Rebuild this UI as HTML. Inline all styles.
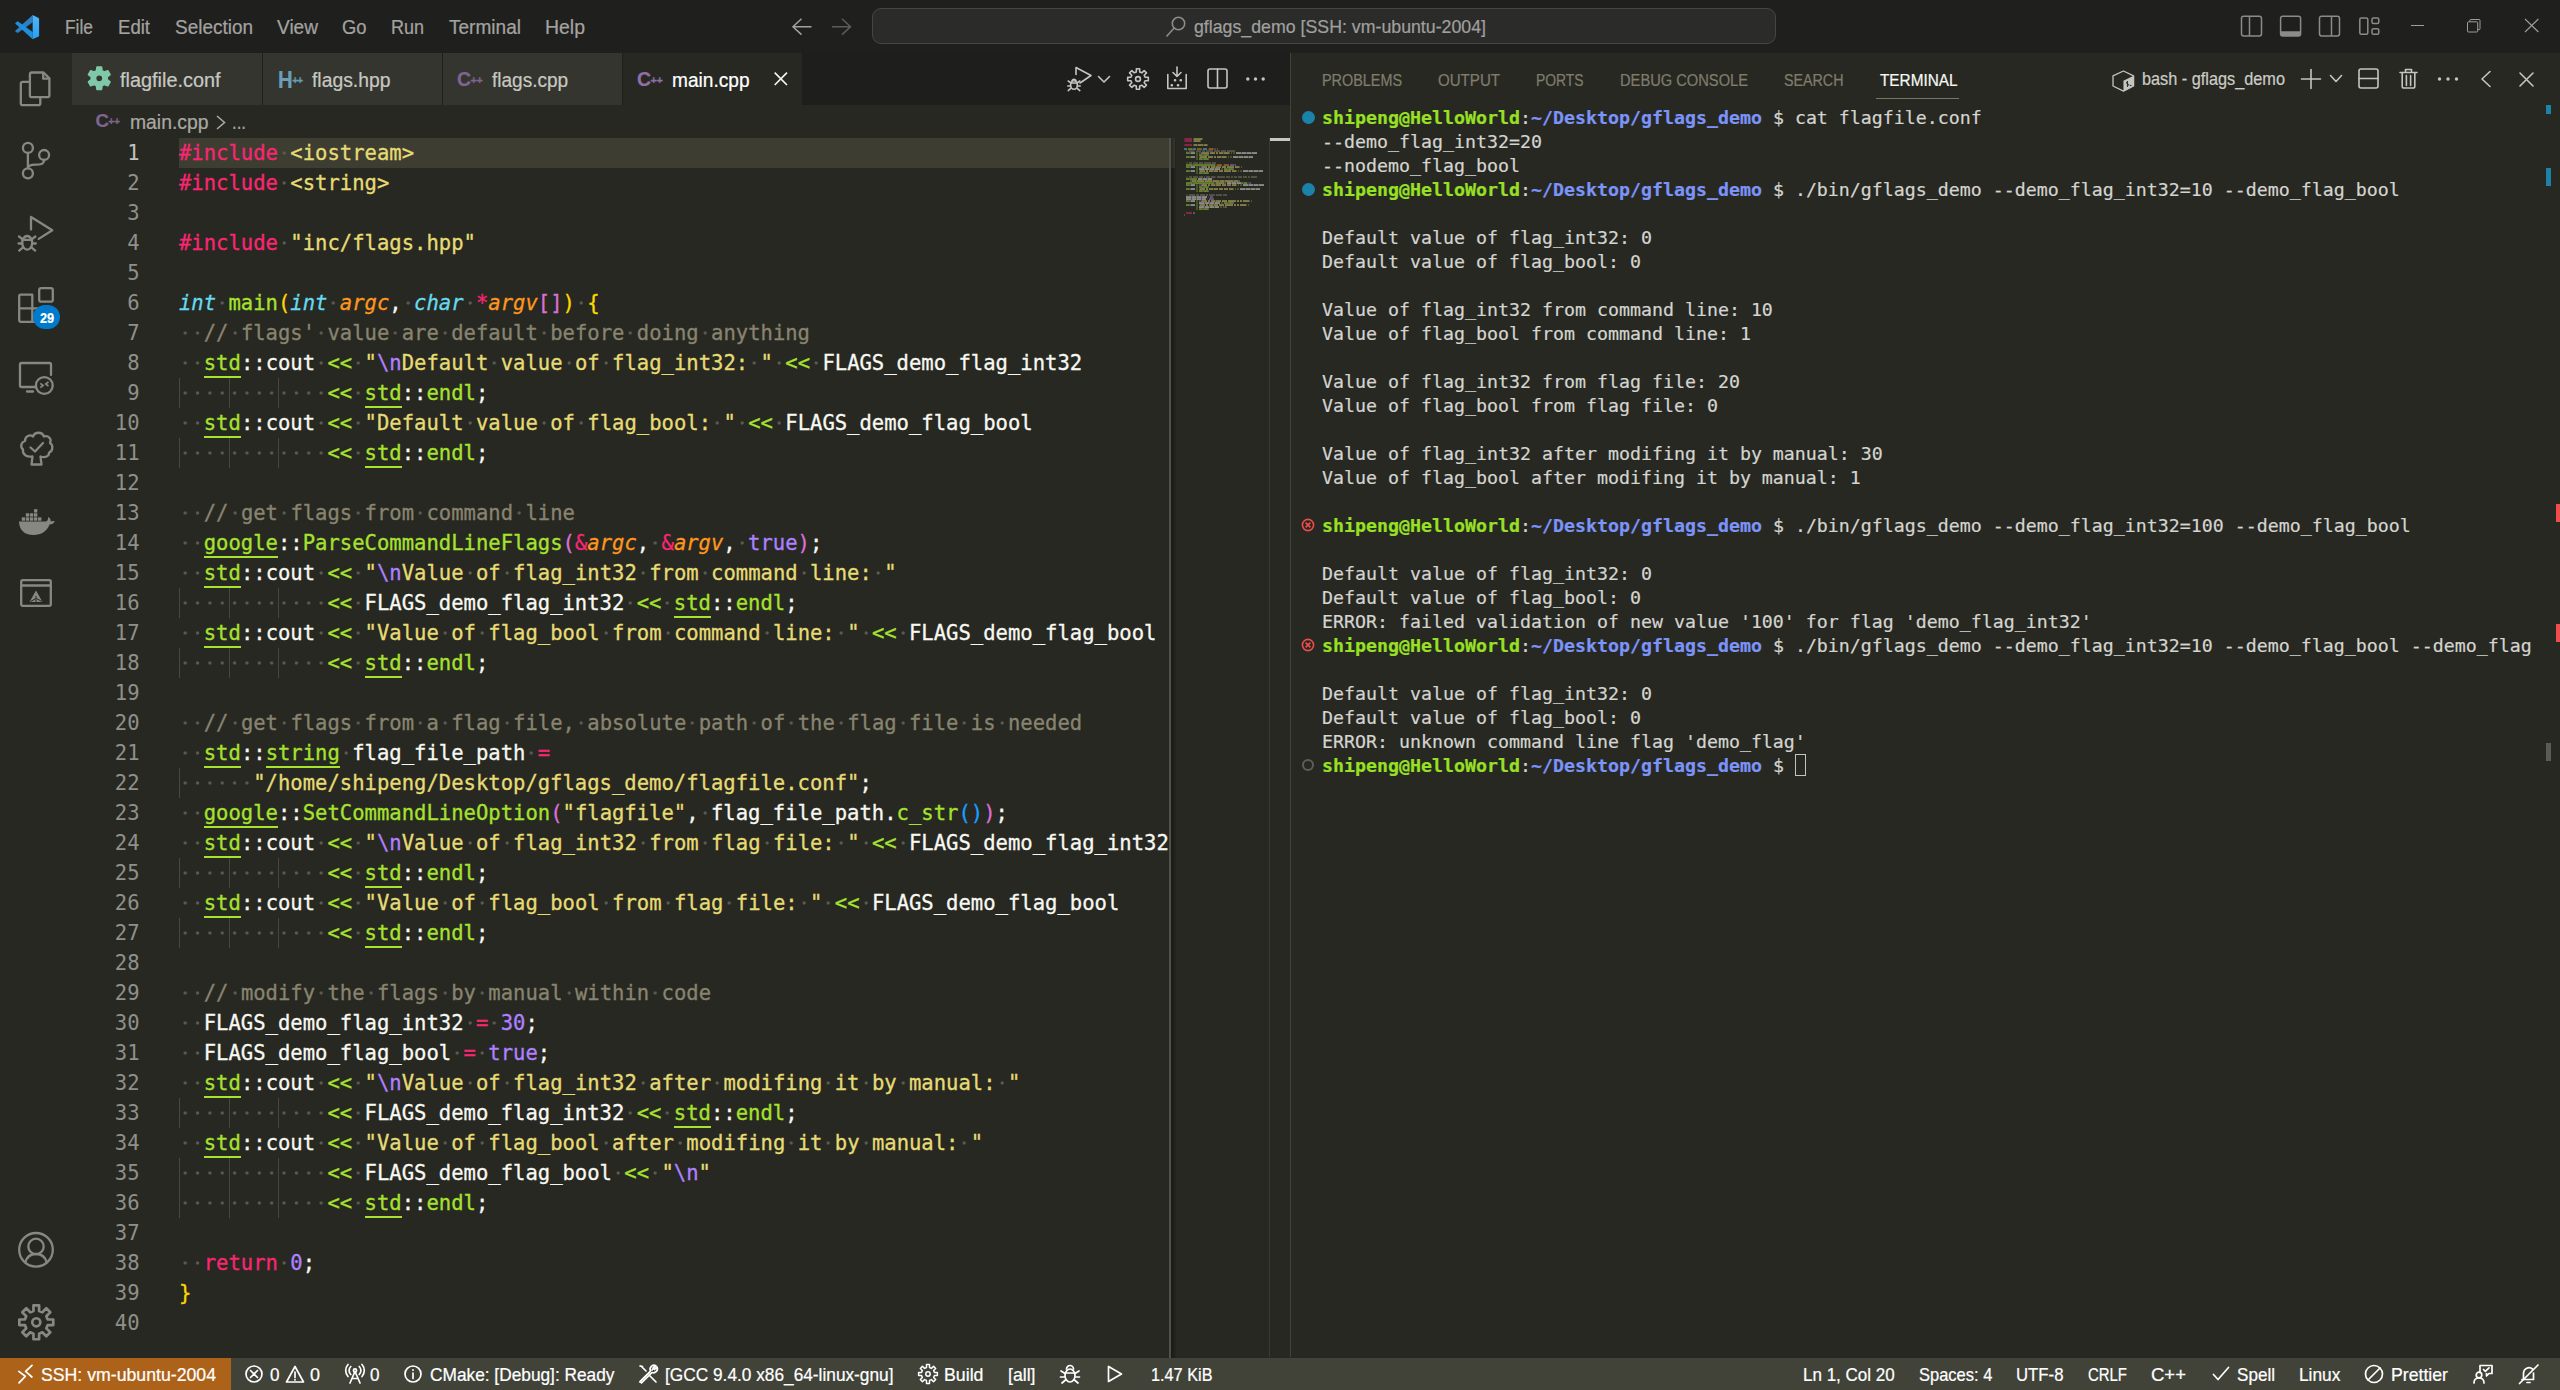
<!DOCTYPE html>
<html><head><meta charset="utf-8"><title>main.cpp - gflags_demo [SSH: vm-ubuntu-2004] - Visual Studio Code</title>
<style>

*{box-sizing:border-box;margin:0;padding:0}
html,body{width:2560px;height:1390px;overflow:hidden;background:#272822}
body{position:relative;font-family:"Liberation Sans",sans-serif;color:#ccc}
.abs{position:absolute}
.lb{position:absolute;white-space:pre;display:block;-webkit-text-stroke:0.22px}
svg{position:absolute;overflow:visible}
#titlebar{position:absolute;left:0;top:0;width:2560px;height:53px;background:#1f1f1e}
#cc{position:absolute;left:872px;top:8px;width:904px;height:36px;border:1px solid #454545;border-radius:9px;background:#2b2b2a}
#act{position:absolute;left:0;top:53px;width:72px;height:1304px;background:#272822}
#tabs{position:absolute;left:72px;top:53px;width:1218px;height:52px;background:#1e1f1c}
.tab{position:absolute;top:0;height:52px;background:#34352f}
.tab.act{background:#272822}
#bc{position:absolute;left:72px;top:105px;width:1218px;height:33px;background:#272822}
#editor{position:absolute;left:0;top:0;width:1169px;height:1357px;overflow:hidden}
.ln{position:absolute;left:72px;width:67.6px;text-align:right;height:30px;line-height:30px;font-family:"DejaVu Sans Mono","Liberation Mono",monospace;font-size:20.55px;color:#90908a;letter-spacing:0px;white-space:pre}
.ln.a{color:#c2c2bf}
.cl{position:absolute;left:179px;height:30px;line-height:30px;font-family:"DejaVu Sans Mono","Liberation Mono",monospace;font-size:20.55px;letter-spacing:0px;white-space:pre;color:#f8f8f2;-webkit-text-stroke:0.3px}
.cl span{display:inline}
.ws{background:radial-gradient(circle at 50% 50%,#595a52 1.1px,rgba(89,90,82,0) 2.1px) 0 -3px/12.37px 30px repeat-x}
.k{color:#f92672} .s{color:#e6db74} .c{color:#88846f} .g{color:#a6e22e}
.u{color:#a6e22e;position:relative} .u::after{content:'';position:absolute;left:0;right:0;top:25px;height:2px;background:#a6e22e}
.t{color:#66d9ef;font-style:italic} .p{color:#fd971f;font-style:italic}
.n{color:#ae81ff} .w{color:#f8f8f2} .b1{color:#ffd700} .b2{color:#da70d6} .b3{color:#179fff}
.ig{position:absolute;width:1px;height:30px;background:#464741}
#hl{position:absolute;left:179px;top:138px;width:996px;height:30px;background:#3e3d32}
.mm{left:1184px;top:138px}
#panel{position:absolute;left:1290px;top:53px;width:1270px;height:1304px;background:#272822;border-left:1px solid #414339}
#term{position:absolute;left:1291px;top:105px;width:1269px;height:1252px;overflow:hidden}
#term .tl{position:absolute;left:31px;height:24px;line-height:24px;font-family:"DejaVu Sans Mono","Liberation Mono",monospace;font-size:18.27px;letter-spacing:0px;white-space:pre;color:#d4d4d0}
#term .tl{margin-top:-104.3px;-webkit-text-stroke:0.2px} #term i, #term svg{margin-top:-105px}
.tg{color:#98e024;font-weight:700;letter-spacing:0px} .tb{color:#7c93f7;font-weight:700;letter-spacing:0px}
.td{position:absolute;left:10.6px;width:13px;height:13px;border-radius:50%;background:#1b83aa}
.to{position:absolute;left:10.9px;width:12.4px;height:12.4px;border-radius:50%;border:2.5px solid #5e5e59}
.te{left:10px}
.cur{position:absolute;left:504px;width:11px;height:22px;border:1px solid #c4c4bf}
#status{position:absolute;left:0;top:1358px;width:2560px;height:32px;background:#414339}
#remote{position:absolute;left:0;top:0;width:231px;height:33px;background:#ac6218}

</style></head><body>
<div id="titlebar">
<svg style="left:14.8px;top:14.8px" width="24.4" height="24.4" viewBox="0 0 24 24" ><defs><linearGradient id="vg" x1="0" y1="0" x2="0" y2="1"><stop offset="0" stop-color="#52b4f8"/><stop offset="1" stop-color="#27a0f4"/></linearGradient></defs><path d="M17.4 0.1V7.2L2.7 17.8 0.5 16.4Q0 15.8 0.5 15.3z" fill="#2a80c2"/><path d="M2.7 6.2 17.4 16.8V23.9L0.5 8.7Q0 8.200 0.500 7.600z" fill="#1f8fdc"/><path d="M17.4 0.1 23.200 2.900Q23.700 3.200 23.700 3.800V20.300Q23.700 20.800 23.200 21.100L17.400 23.900z" fill="url(#vg)"/></svg>
<span class="lb" style="left:65px;top:12.2px;height:30px;line-height:30px;font-size:19.4px;color:#a3a3a0;font-family:'Liberation Sans',sans-serif;font-weight:400;transform:scaleX(0.8960);transform-origin:0 50%;">File</span>
<span class="lb" style="left:118px;top:12.2px;height:30px;line-height:30px;font-size:19.4px;color:#a3a3a0;font-family:'Liberation Sans',sans-serif;font-weight:400;transform:scaleX(0.9575);transform-origin:0 50%;">Edit</span>
<span class="lb" style="left:174.5px;top:12.2px;height:30px;line-height:30px;font-size:19.4px;color:#a3a3a0;font-family:'Liberation Sans',sans-serif;font-weight:400;transform:scaleX(0.9777);transform-origin:0 50%;">Selection</span>
<span class="lb" style="left:277px;top:12.2px;height:30px;line-height:30px;font-size:19.4px;color:#a3a3a0;font-family:'Liberation Sans',sans-serif;font-weight:400;transform:scaleX(0.9835);transform-origin:0 50%;">View</span>
<span class="lb" style="left:342px;top:12.2px;height:30px;line-height:30px;font-size:19.4px;color:#a3a3a0;font-family:'Liberation Sans',sans-serif;font-weight:400;transform:scaleX(0.9469);transform-origin:0 50%;">Go</span>
<span class="lb" style="left:391px;top:12.2px;height:30px;line-height:30px;font-size:19.4px;color:#a3a3a0;font-family:'Liberation Sans',sans-serif;font-weight:400;transform:scaleX(0.9275);transform-origin:0 50%;">Run</span>
<span class="lb" style="left:448.5px;top:12.2px;height:30px;line-height:30px;font-size:19.4px;color:#a3a3a0;font-family:'Liberation Sans',sans-serif;font-weight:400;transform:scaleX(0.9825);transform-origin:0 50%;">Terminal</span>
<span class="lb" style="left:545px;top:12.2px;height:30px;line-height:30px;font-size:19.4px;color:#a3a3a0;font-family:'Liberation Sans',sans-serif;font-weight:400;transform:scaleX(1.0027);transform-origin:0 50%;">Help</span>
<svg style="left:791px;top:16px" width="22" height="21" viewBox="0 0 22 21" ><path d="M10.500 2.800 2 10.700l8.500 7.900M2 10.700H20.500" fill="none" stroke="#a2a2a0" stroke-width="1.500"/></svg>
<svg style="left:830px;top:16px" width="22" height="21" viewBox="0 0 22 21" ><path d="M12 2.800l8.500 7.900-8.500 7.900M20.500 10.700H2" fill="none" stroke="#5c5c5a" stroke-width="1.500"/></svg>
<div id="cc"></div>
<svg style="left:1165px;top:15px" width="22" height="23" viewBox="0 0 22 23" ><circle cx="13.500" cy="8.500" r="6.200" fill="none" stroke="#8c8c8a" stroke-width="1.600"/><path d="M9.200 13 1.500 21.500" stroke="#8c8c8a" stroke-width="1.600"/></svg>
<span class="lb" style="left:1194px;top:12.0px;height:30px;line-height:30px;font-size:19px;color:#a0a09e;font-family:'Liberation Sans',sans-serif;font-weight:400;transform:scaleX(0.9340);transform-origin:0 50%;">gflags_demo [SSH: vm-ubuntu-2004]</span>
<svg style="left:2240px;top:15px" width="23" height="22" viewBox="0 0 23 22" ><rect x="1.500" y="1.200" width="20" height="19.700" rx="2.200" fill="none" stroke="#8b8b88" stroke-width="1.500"/><path d="M9.500 1.200v19.700" fill="none" stroke="#8b8b88" stroke-width="1.500"/></svg>
<svg style="left:2279px;top:15px" width="23" height="22" viewBox="0 0 23 22" ><rect x="1.600" y="1.200" width="20" height="19.700" rx="2.200" fill="none" stroke="#8b8b88" stroke-width="1.500"/><path d="M1.600 16.200h20v2.500a2.200 2.200 0 0 1-2.200 2.200H3.800a2.200 2.200 0 0 1-2.200-2.200z" fill="#8b8b88"/></svg>
<svg style="left:2318px;top:15px" width="23" height="22" viewBox="0 0 23 22" ><rect x="1.500" y="1.200" width="20" height="19.700" rx="2.200" fill="none" stroke="#8b8b88" stroke-width="1.500"/><path d="M13.500 1.200v19.700" fill="none" stroke="#8b8b88" stroke-width="1.500"/></svg>
<svg style="left:2358px;top:15px" width="23" height="22" viewBox="0 0 23 22" ><rect x="1.800" y="3" width="8" height="16.200" rx="1.500" fill="none" stroke="#8b8b88" stroke-width="1.500"/><rect x="14" y="3" width="6.800" height="5.400" rx="1.500" fill="none" stroke="#8b8b88" stroke-width="1.500"/><rect x="14" y="13.800" width="6.800" height="5.400" rx="1.500" fill="none" stroke="#8b8b88" stroke-width="1.500"/></svg>
<svg style="left:2411px;top:24.8px" width="13" height="1" viewBox="0 0 13 1" ><path d="M0 .5h13" stroke="#9d9d9a" stroke-width="1"/></svg>
<svg style="left:2467px;top:19px" width="14" height="14" viewBox="0 0 14 14" ><rect x="0.500" y="2.800" width="10.200" height="10.200" rx="1" fill="none" stroke="#9d9d9a" stroke-width="1"/><path d="M2.800 2.800V1.500Q2.800 0.500 3.800 0.500H12Q13 0.500 13 1.500V9.700Q13 10.700 12 10.700H10.700" fill="none" stroke="#9d9d9a" stroke-width="1"/></svg>
<svg style="left:2525px;top:19px" width="13.4" height="13" viewBox="0 0 13.4 13" ><path d="M0 0l13.400 13M13.400 0 0 13" stroke="#9d9d9a" stroke-width="1.100"/></svg>
</div>
<div id="act"></div>
<svg style="left:0px;top:0px" width="72" height="300" viewBox="0 0 72 300" ><path d="M29.900 95.200V74.500a2 2 0 0 1 2-2H43.500L49.400 78.400V95.200a2 2 0 0 1-2 2H31.900a2 2 0 0 1-2-2z" fill="none" stroke="#888882" stroke-width="2.300" stroke-linejoin="round" stroke-linecap="round"/><path d="M43.200 72.800V78.700H49.100" fill="none" stroke="#888882" stroke-width="2.300" stroke-linejoin="round" stroke-linecap="round"/><path d="M29.600 81.900H22.800a2 2 0 0 0-2 2V103.200a2 2 0 0 0 2 2H38.300a2 2 0 0 0 2-2V97.600" fill="none" stroke="#888882" stroke-width="2.300" stroke-linejoin="round" stroke-linecap="round"/>
<circle cx="27.900" cy="147.900" r="5" fill="none" stroke="#888882" stroke-width="2.300" stroke-linejoin="round" stroke-linecap="round"/><circle cx="27.900" cy="173.300" r="5" fill="none" stroke="#888882" stroke-width="2.300" stroke-linejoin="round" stroke-linecap="round"/><circle cx="44.100" cy="155" r="5" fill="none" stroke="#888882" stroke-width="2.300" stroke-linejoin="round" stroke-linecap="round"/><path d="M27.900 152.900V168.300M44.100 160c-.4 4.400-3.600 4.600-8.600 4.600-4.600 0-7.600.8-7.600 3.700" fill="none" stroke="#888882" stroke-width="2.300" stroke-linejoin="round" stroke-linecap="round"/>
<path d="M31 229.500V217l21.300 13.200-13.600 8.700" fill="none" stroke="#888882" stroke-width="2.300" stroke-linejoin="round" stroke-linecap="round"/><ellipse cx="27.200" cy="242.800" rx="5" ry="6.800" fill="none" stroke="#888882" stroke-width="2.300" stroke-linejoin="round" stroke-linecap="round"/><path d="M22.200 239.800h10M19 236.500l3.400 2.600M35.400 236.500l-3.400 2.600M18.600 243.500h3.600M32.200 243.500h3.600M19.200 250.600l3.800-3.200M35.200 250.600l-3.800-3.200" fill="none" stroke="#888882" stroke-width="2.300" stroke-linejoin="round" stroke-linecap="round"/></svg>
<svg style="left:18px;top:286px" width="38" height="38" viewBox="0 0 38 38" ><path d="M1.200 10.200a1.500 1.500 0 0 1 1.500-1.500h11.600v27.100H2.700a1.500 1.500 0 0 1-1.500-1.500zM1.200 22.400h26.400v13.400H14.300" fill="none" stroke="#888882" stroke-width="2.300" stroke-linejoin="round" stroke-linecap="round"/><path d="M27.600 22.400v13.400H14" fill="none" stroke="#888882" stroke-width="2.300" stroke-linejoin="round" stroke-linecap="round"/><rect x="21.200" y="2.200" width="13.600" height="13.500" rx="2" fill="none" stroke="#888882" stroke-width="2.300" stroke-linejoin="round" stroke-linecap="round"/></svg>
<div class="abs" style="left:33px;top:305px;width:27px;height:24px;border-radius:12px;background:#007acc"></div>
<span class="lb" style="left:39.8px;top:304.1px;height:30px;line-height:30px;font-size:13.8px;color:#fff;font-family:'Liberation Sans',sans-serif;font-weight:700;transform:scaleX(0.9245);transform-origin:0 50%;">29</span>
<svg style="left:18px;top:361px" width="38" height="36" viewBox="0 0 38 36" ><path d="M22 26H3.500a1.500 1.500 0 0 1-1.500-1.500v-21A1.500 1.500 0 0 1 3.500 2h28A1.500 1.500 0 0 1 33 3.500V14" fill="none" stroke="#888882" stroke-width="2.300" stroke-linejoin="round" stroke-linecap="round"/><path d="M9 30.500h6" fill="none" stroke="#888882" stroke-width="2.300" stroke-linejoin="round" stroke-linecap="round"/><circle cx="26.300" cy="24.500" r="8.400" fill="#272822" stroke="#888882" stroke-width="2.300"/><path d="M22.300 22.400l2.800 2.100-2.800 2.200M30.500 20.900l-2.800 2.100 2.800 2.200" fill="none" stroke="#888882" stroke-width="1.700"/></svg>
<svg style="left:19px;top:430px" width="36" height="38" viewBox="0 0 36 38" ><path d="M13.500 26.500C8 27.500 3 24.500 4 19.500 1 17 2 12 6 11 6 6 11 4 14 6.500 16 1.500 23 1.500 25 6.500 29.500 5 33 9 31 13 34.500 15 34 21.500 30 22.500 30.500 26.500 26 28 21.500 26.500L22.500 34.500H12.500z" fill="none" stroke="#888882" stroke-width="2.300" stroke-linejoin="round" stroke-linecap="round"/><path d="M11.500 17.500 16 21.500 24 13" fill="none" stroke="#888882" stroke-width="2.300" stroke-linejoin="round" stroke-linecap="round"/></svg>
<svg style="left:17.5px;top:508.6px" width="37.2" height="26" viewBox="0 0 40 28" ><path d="M1 13.500h28.500c2-.4 3-2 3-5 2.500 1.500 3 3.500 2.500 5 1.500-.8 3-.8 4.500-.3-1 2.500-3 3.500-5.500 3.500C31 24 25.500 28 16.500 28 6.500 28 1.500 22.500 1 13.500z" fill="#888882"/><g fill="#888882"><rect x="4" y="9" width="3.600" height="3.600"/><rect x="8.400" y="9" width="3.600" height="3.600"/><rect x="12.800" y="9" width="3.600" height="3.600"/><rect x="17.200" y="9" width="3.600" height="3.600"/><rect x="21.600" y="9" width="3.600" height="3.600"/><rect x="8.400" y="4.600" width="3.600" height="3.600"/><rect x="12.800" y="4.600" width="3.600" height="3.600"/><rect x="17.200" y="4.600" width="3.600" height="3.600"/><rect x="17.200" y="0.200" width="3.600" height="3.600"/></g></svg>
<svg style="left:20px;top:579px" width="32" height="28" viewBox="0 0 32 28" ><rect x="1.200" y="1.200" width="29.600" height="25.600" rx="1.500" fill="none" stroke="#888882" stroke-width="2.300" stroke-linejoin="round" stroke-linecap="round"/><path d="M1.500 6.500h29" fill="none" stroke="#888882" stroke-width="2.300" stroke-linejoin="round" stroke-linecap="round"/><path d="M16 11.500 22.500 23h-13z" fill="#888882"/><path d="M16 17v6M16 19.500 10.500 22.500M16.500 19.500 22 22.500" stroke="#272822" stroke-width="1"/></svg>
<svg style="left:0px;top:1200px" width="72" height="100" viewBox="0 0 72 100" ><circle cx="36" cy="49.800" r="16.800" fill="none" stroke="#888882" stroke-width="2.300" stroke-linejoin="round" stroke-linecap="round"/><circle cx="36" cy="46.400" r="7.700" fill="none" stroke="#888882" stroke-width="2.300" stroke-linejoin="round" stroke-linecap="round"/><path d="M25.300 62.500c1.400-5.600 5.600-8.500 10.700-8.500s9.300 2.900 10.700 8.500" fill="none" stroke="#888882" stroke-width="2.300" stroke-linejoin="round" stroke-linecap="round"/></svg>
<svg style="left:17.5px;top:1303.6px" width="36.6" height="36.6" viewBox="0 0 36.6 36.6" ><path d="M15.48 6.93 L15.48 1.33 L21.12 1.33 L21.12 6.93 L24.34 8.27 L28.30 4.30 L32.30 8.30 L28.33 12.26 L29.67 15.48 L35.27 15.48 L35.27 21.12 L29.67 21.12 L28.33 24.34 L32.30 28.30 L28.30 32.30 L24.34 28.33 L21.12 29.67 L21.12 35.27 L15.48 35.27 L15.48 29.67 L12.26 28.33 L8.30 32.30 L4.30 28.30 L8.27 24.34 L6.93 21.12 L1.33 21.12 L1.33 15.48 L6.93 15.48 L8.27 12.26 L4.30 8.30 L8.30 4.30 L12.26 8.27Z" fill="none" stroke="#888882" stroke-width="2.7" stroke-linejoin="round"/><circle cx="18.3" cy="18.3" r="4.03" fill="none" stroke="#888882" stroke-width="2.7"/></svg>
<div id="tabs">
<div class="tab" style="left:0px;width:190px"></div>
<div class="tab" style="left:191px;width:179px"></div>
<div class="tab" style="left:371px;width:179px"></div>
<div class="tab act" style="left:551px;width:179px"></div>
</div><div id="bc"></div>
<svg style="left:86.5px;top:66.3px" width="24.5" height="24.5" viewBox="0 0 24.5 24.5" ><path d="M9.51 4.64 L10.00 1.08 L14.50 1.08 L14.99 4.64 L17.47 6.07 L20.80 4.72 L23.05 8.62 L20.21 10.82 L20.21 13.68 L23.05 15.88 L20.80 19.78 L17.47 18.43 L14.99 19.86 L14.50 23.42 L10.00 23.42 L9.51 19.86 L7.03 18.43 L3.70 19.78 L1.45 15.88 L4.29 13.68 L4.29 10.82 L1.45 8.62 L3.70 4.72 L7.03 6.07Z M8.57 12.25a3.67 3.67 0 1 0 7.35 0a3.67 3.67 0 1 0 -7.35 0Z" fill="#7fc9a9" fill-rule="evenodd" stroke="#7fc9a9" stroke-width="1.6" stroke-linejoin="round"/></svg>
<span class="lb" style="left:120px;top:65.3px;height:30px;line-height:30px;font-size:20px;color:#c8c8c2;font-family:'Liberation Sans',sans-serif;font-weight:400;transform:scaleX(0.9934);transform-origin:0 50%;">flagfile.conf</span>
<span class="lb" style="left:277.5px;top:64.5px;height:30px;line-height:30px;font-size:23px;color:#6a9fb5;font-family:'Liberation Sans',sans-serif;font-weight:700;transform:scaleX(0.8842);transform-origin:0 50%;">H</span><span class="lb" style="left:292.3px;top:65.5px;height:30px;line-height:30px;font-size:10px;color:#6a9fb5;font-family:'Liberation Sans',sans-serif;font-weight:700;letter-spacing:-0.8px">++</span>
<span class="lb" style="left:311.5px;top:65.3px;height:30px;line-height:30px;font-size:20px;color:#c8c8c2;font-family:'Liberation Sans',sans-serif;font-weight:400;transform:scaleX(0.9671);transform-origin:0 50%;">flags.hpp</span>
<span class="lb" style="left:457px;top:64.2px;height:30px;line-height:30px;font-size:19.5px;color:#7e6592;font-family:'Liberation Sans',sans-serif;font-weight:700;">C</span><span class="lb" style="left:470.54px;top:65.2px;height:30px;line-height:30px;font-size:10.920000000000002px;color:#7e6592;font-family:'Liberation Sans',sans-serif;font-weight:700;letter-spacing:-0.3px">++</span>
<span class="lb" style="left:491.8px;top:65.3px;height:30px;line-height:30px;font-size:20px;color:#c8c8c2;font-family:'Liberation Sans',sans-serif;font-weight:400;transform:scaleX(0.9518);transform-origin:0 50%;">flags.cpp</span>
<span class="lb" style="left:637px;top:64.2px;height:30px;line-height:30px;font-size:19.5px;color:#8e6fa8;font-family:'Liberation Sans',sans-serif;font-weight:700;">C</span><span class="lb" style="left:650.54px;top:65.2px;height:30px;line-height:30px;font-size:10.920000000000002px;color:#8e6fa8;font-family:'Liberation Sans',sans-serif;font-weight:700;letter-spacing:-0.3px">++</span>
<span class="lb" style="left:672px;top:65.3px;height:30px;line-height:30px;font-size:20px;color:#ffffff;font-family:'Liberation Sans',sans-serif;font-weight:400;transform:scaleX(0.9562);transform-origin:0 50%;">main.cpp</span>
<svg style="left:774px;top:72.2px" width="13.7" height="13.7" viewBox="0 0 13.7 13.7" ><path d="M0.7 0.7l12.3 12.3M13 0.7l-12.3 12.3" stroke="#f4f4ee" stroke-width="1.7"/></svg>
<span class="lb" style="left:95.5px;top:106.3px;height:30px;line-height:30px;font-size:18.5px;color:#7e6592;font-family:'Liberation Sans',sans-serif;font-weight:700;">C</span><span class="lb" style="left:108.32px;top:107.3px;height:30px;line-height:30px;font-size:10.360000000000001px;color:#7e6592;font-family:'Liberation Sans',sans-serif;font-weight:700;letter-spacing:-0.3px">++</span>
<span class="lb" style="left:129.5px;top:107.3px;height:30px;line-height:30px;font-size:19.4px;color:#a9a9a3;font-family:'Liberation Sans',sans-serif;font-weight:400;transform:scaleX(0.9976);transform-origin:0 50%;">main.cpp</span>
<svg style="left:214.5px;top:114.5px" width="11" height="15" viewBox="0 0 11 15" ><path d="M2 1 9.500 7.500 2 14" fill="none" stroke="#a9a9a3" stroke-width="1.6"/></svg>
<span class="lb" style="left:232px;top:107.3px;height:30px;line-height:30px;font-size:19.4px;color:#a9a9a3;font-family:'Liberation Sans',sans-serif;font-weight:400;transform:scaleX(0.8657);transform-origin:0 50%;">...</span>
<svg style="left:1066px;top:66px" width="28" height="28" viewBox="0 0 28 28" ><path d="M10 8.500V1.500L25 9.500 14 17" fill="none" stroke="#c5c5c0" stroke-width="1.6" stroke-linejoin="round" stroke-linecap="round"/><ellipse cx="8" cy="19" rx="3.400" ry="4.300" fill="none" stroke="#c5c5c0" stroke-width="1.6" stroke-linejoin="round" stroke-linecap="round"/><path d="M4.600 17h6.800M2.200 15l2.400 1.600M13.800 15l-2.400 1.600M1.800 20h2.800M11.400 20h2.800M2.200 24.600l2.600-2.200M13.800 24.600l-2.600-2.200M6 14.600a2.200 2.200 0 0 1 4 0" fill="none" stroke="#c5c5c0" stroke-width="1.6" stroke-linejoin="round" stroke-linecap="round"/></svg>
<svg style="left:1097px;top:75px" width="14" height="10" viewBox="0 0 14 10" ><path d="M1.500 1.500 7 7 12.500 1.500" fill="none" stroke="#c5c5c0" stroke-width="1.6" stroke-linejoin="round" stroke-linecap="round"/></svg>
<svg style="left:1127px;top:68px" width="22" height="22" viewBox="0 0 22 22" ><path d="M9.31 3.94 L9.37 0.68 L12.63 0.68 L12.69 3.94 L14.79 4.81 L17.14 2.55 L19.45 4.86 L17.19 7.21 L18.06 9.31 L21.32 9.37 L21.32 12.63 L18.06 12.69 L17.19 14.79 L19.45 17.14 L17.14 19.45 L14.79 17.19 L12.69 18.06 L12.63 21.32 L9.37 21.32 L9.31 18.06 L7.21 17.19 L4.86 19.45 L2.55 17.14 L4.81 14.79 L3.94 12.69 L0.68 12.63 L0.68 9.37 L3.94 9.31 L4.81 7.21 L2.55 4.86 L4.86 2.55 L7.21 4.81Z" fill="none" stroke="#c5c5c0" stroke-width="1.6" stroke-linejoin="round"/><circle cx="11.0" cy="11.0" r="2.42" fill="none" stroke="#c5c5c0" stroke-width="1.6"/></svg>
<svg style="left:1166px;top:66px" width="22" height="24" viewBox="0 0 22 24" ><path d="M1.800 8.500v14h18.400V8.500M11 1v9.500M7 6.500l4 4 4-4" fill="none" stroke="#c5c5c0" stroke-width="1.6" stroke-linejoin="round" stroke-linecap="round"/><path d="M9 14.300h.1M14.700 14.300h.1M5.800 19.200h.1M12 19.200h.1" stroke="#c5c5c0" stroke-width="2.600" stroke-linecap="round"/></svg>
<svg style="left:1207px;top:68px" width="21" height="21" viewBox="0 0 21 21" ><rect x="1" y="1" width="19" height="19" rx="2" fill="none" stroke="#c5c5c0" stroke-width="1.6" stroke-linejoin="round" stroke-linecap="round"/><path d="M10.500 1v19" fill="none" stroke="#c5c5c0" stroke-width="1.6" stroke-linejoin="round" stroke-linecap="round"/></svg>
<svg style="left:1245px;top:77px" width="22" height="4" viewBox="0 0 22 4" ><circle cx="2.800" cy="2" r="1.700" fill="#c5c5c0"/><circle cx="10.500" cy="2" r="1.700" fill="#c5c5c0"/><circle cx="18.200" cy="2" r="1.700" fill="#c5c5c0"/></svg>
<div id="hl"></div>
<div id="editor">
<div class="ln a" style="top:138px">1</div>
<div class="cl" style="top:138px"><span class="k">#include</span><span class="ws"> </span><span class="s">&lt;iostream&gt;</span></div>
<div class="ln" style="top:168px">2</div>
<div class="cl" style="top:168px"><span class="k">#include</span><span class="ws"> </span><span class="s">&lt;string&gt;</span></div>
<div class="ln" style="top:198px">3</div>
<div class="ln" style="top:228px">4</div>
<div class="cl" style="top:228px"><span class="k">#include</span><span class="ws"> </span><span class="s">"inc/flags.hpp"</span></div>
<div class="ln" style="top:258px">5</div>
<div class="ln" style="top:288px">6</div>
<div class="cl" style="top:288px"><span class="t">int</span><span class="ws"> </span><span class="g">main</span><span class="b1">(</span><span class="t">int</span><span class="ws"> </span><span class="p">argc</span><span class="w">,</span><span class="ws"> </span><span class="t">char</span><span class="ws"> </span><span class="k">*</span><span class="p">argv</span><span class="b2">[]</span><span class="b1">)</span><span class="ws"> </span><span class="b1">{</span></div>
<div class="ln" style="top:318px">7</div>
<div class="cl" style="top:318px"><span class="ws">  </span><span class="c">//<span class="ws"> </span>flags'<span class="ws"> </span>value<span class="ws"> </span>are<span class="ws"> </span>default<span class="ws"> </span>before<span class="ws"> </span>doing<span class="ws"> </span>anything</span></div>
<div class="ln" style="top:348px">8</div>
<div class="cl" style="top:348px"><span class="ws">  </span><span class="u">std</span><span class="w">::</span><span class="w">cout</span><span class="ws"> </span><span class="g">&lt;&lt;</span><span class="ws"> </span><span class="s">"</span><span class="n">\n</span><span class="s">Default<span class="ws"> </span>value<span class="ws"> </span>of<span class="ws"> </span>flag_int32:<span class="ws"> </span>"</span><span class="ws"> </span><span class="g">&lt;&lt;</span><span class="ws"> </span><span class="w">FLAGS_demo_flag_int32</span></div>
<div class="ln" style="top:378px">9</div>
<i class="ig" style="left:179.0px;top:378px"></i>
<i class="ig" style="left:228.5px;top:378px"></i>
<i class="ig" style="left:278.0px;top:378px"></i>
<div class="cl" style="top:378px"><span class="ws">            </span><span class="g">&lt;&lt;</span><span class="ws"> </span><span class="u">std</span><span class="w">::</span><span class="g">endl</span><span class="w">;</span></div>
<div class="ln" style="top:408px">10</div>
<div class="cl" style="top:408px"><span class="ws">  </span><span class="u">std</span><span class="w">::</span><span class="w">cout</span><span class="ws"> </span><span class="g">&lt;&lt;</span><span class="ws"> </span><span class="s">"Default<span class="ws"> </span>value<span class="ws"> </span>of<span class="ws"> </span>flag_bool:<span class="ws"> </span>"</span><span class="ws"> </span><span class="g">&lt;&lt;</span><span class="ws"> </span><span class="w">FLAGS_demo_flag_bool</span></div>
<div class="ln" style="top:438px">11</div>
<i class="ig" style="left:179.0px;top:438px"></i>
<i class="ig" style="left:228.5px;top:438px"></i>
<i class="ig" style="left:278.0px;top:438px"></i>
<div class="cl" style="top:438px"><span class="ws">            </span><span class="g">&lt;&lt;</span><span class="ws"> </span><span class="u">std</span><span class="w">::</span><span class="g">endl</span><span class="w">;</span></div>
<div class="ln" style="top:468px">12</div>
<div class="ln" style="top:498px">13</div>
<div class="cl" style="top:498px"><span class="ws">  </span><span class="c">//<span class="ws"> </span>get<span class="ws"> </span>flags<span class="ws"> </span>from<span class="ws"> </span>command<span class="ws"> </span>line</span></div>
<div class="ln" style="top:528px">14</div>
<div class="cl" style="top:528px"><span class="ws">  </span><span class="u">google</span><span class="w">::</span><span class="g">ParseCommandLineFlags</span><span class="b2">(</span><span class="k">&amp;</span><span class="p">argc</span><span class="w">,</span><span class="ws"> </span><span class="k">&amp;</span><span class="p">argv</span><span class="w">,</span><span class="ws"> </span><span class="n">true</span><span class="b2">)</span><span class="w">;</span></div>
<div class="ln" style="top:558px">15</div>
<div class="cl" style="top:558px"><span class="ws">  </span><span class="u">std</span><span class="w">::</span><span class="w">cout</span><span class="ws"> </span><span class="g">&lt;&lt;</span><span class="ws"> </span><span class="s">"</span><span class="n">\n</span><span class="s">Value<span class="ws"> </span>of<span class="ws"> </span>flag_int32<span class="ws"> </span>from<span class="ws"> </span>command<span class="ws"> </span>line:<span class="ws"> </span>"</span></div>
<div class="ln" style="top:588px">16</div>
<i class="ig" style="left:179.0px;top:588px"></i>
<i class="ig" style="left:228.5px;top:588px"></i>
<i class="ig" style="left:278.0px;top:588px"></i>
<div class="cl" style="top:588px"><span class="ws">            </span><span class="g">&lt;&lt;</span><span class="ws"> </span><span class="w">FLAGS_demo_flag_int32</span><span class="ws"> </span><span class="g">&lt;&lt;</span><span class="ws"> </span><span class="u">std</span><span class="w">::</span><span class="g">endl</span><span class="w">;</span></div>
<div class="ln" style="top:618px">17</div>
<div class="cl" style="top:618px"><span class="ws">  </span><span class="u">std</span><span class="w">::</span><span class="w">cout</span><span class="ws"> </span><span class="g">&lt;&lt;</span><span class="ws"> </span><span class="s">"Value<span class="ws"> </span>of<span class="ws"> </span>flag_bool<span class="ws"> </span>from<span class="ws"> </span>command<span class="ws"> </span>line:<span class="ws"> </span>"</span><span class="ws"> </span><span class="g">&lt;&lt;</span><span class="ws"> </span><span class="w">FLAGS_demo_flag_bool</span></div>
<div class="ln" style="top:648px">18</div>
<i class="ig" style="left:179.0px;top:648px"></i>
<i class="ig" style="left:228.5px;top:648px"></i>
<i class="ig" style="left:278.0px;top:648px"></i>
<div class="cl" style="top:648px"><span class="ws">            </span><span class="g">&lt;&lt;</span><span class="ws"> </span><span class="u">std</span><span class="w">::</span><span class="g">endl</span><span class="w">;</span></div>
<div class="ln" style="top:678px">19</div>
<div class="ln" style="top:708px">20</div>
<div class="cl" style="top:708px"><span class="ws">  </span><span class="c">//<span class="ws"> </span>get<span class="ws"> </span>flags<span class="ws"> </span>from<span class="ws"> </span>a<span class="ws"> </span>flag<span class="ws"> </span>file,<span class="ws"> </span>absolute<span class="ws"> </span>path<span class="ws"> </span>of<span class="ws"> </span>the<span class="ws"> </span>flag<span class="ws"> </span>file<span class="ws"> </span>is<span class="ws"> </span>needed</span></div>
<div class="ln" style="top:738px">21</div>
<div class="cl" style="top:738px"><span class="ws">  </span><span class="u">std</span><span class="w">::</span><span class="u">string</span><span class="ws"> </span><span class="w">flag_file_path</span><span class="ws"> </span><span class="k">=</span></div>
<div class="ln" style="top:768px">22</div>
<i class="ig" style="left:179.0px;top:768px"></i>
<div class="cl" style="top:768px"><span class="ws">      </span><span class="s">"/home/shipeng/Desktop/gflags_demo/flagfile.conf"</span><span class="w">;</span></div>
<div class="ln" style="top:798px">23</div>
<div class="cl" style="top:798px"><span class="ws">  </span><span class="u">google</span><span class="w">::</span><span class="g">SetCommandLineOption</span><span class="b2">(</span><span class="s">"flagfile"</span><span class="w">,</span><span class="ws"> </span><span class="w">flag_file_path</span><span class="w">.</span><span class="g">c_str</span><span class="b3">()</span><span class="b2">)</span><span class="w">;</span></div>
<div class="ln" style="top:828px">24</div>
<div class="cl" style="top:828px"><span class="ws">  </span><span class="u">std</span><span class="w">::</span><span class="w">cout</span><span class="ws"> </span><span class="g">&lt;&lt;</span><span class="ws"> </span><span class="s">"</span><span class="n">\n</span><span class="s">Value<span class="ws"> </span>of<span class="ws"> </span>flag_int32<span class="ws"> </span>from<span class="ws"> </span>flag<span class="ws"> </span>file:<span class="ws"> </span>"</span><span class="ws"> </span><span class="g">&lt;&lt;</span><span class="ws"> </span><span class="w">FLAGS_demo_flag_int32</span></div>
<div class="ln" style="top:858px">25</div>
<i class="ig" style="left:179.0px;top:858px"></i>
<i class="ig" style="left:228.5px;top:858px"></i>
<i class="ig" style="left:278.0px;top:858px"></i>
<div class="cl" style="top:858px"><span class="ws">            </span><span class="g">&lt;&lt;</span><span class="ws"> </span><span class="u">std</span><span class="w">::</span><span class="g">endl</span><span class="w">;</span></div>
<div class="ln" style="top:888px">26</div>
<div class="cl" style="top:888px"><span class="ws">  </span><span class="u">std</span><span class="w">::</span><span class="w">cout</span><span class="ws"> </span><span class="g">&lt;&lt;</span><span class="ws"> </span><span class="s">"Value<span class="ws"> </span>of<span class="ws"> </span>flag_bool<span class="ws"> </span>from<span class="ws"> </span>flag<span class="ws"> </span>file:<span class="ws"> </span>"</span><span class="ws"> </span><span class="g">&lt;&lt;</span><span class="ws"> </span><span class="w">FLAGS_demo_flag_bool</span></div>
<div class="ln" style="top:918px">27</div>
<i class="ig" style="left:179.0px;top:918px"></i>
<i class="ig" style="left:228.5px;top:918px"></i>
<i class="ig" style="left:278.0px;top:918px"></i>
<div class="cl" style="top:918px"><span class="ws">            </span><span class="g">&lt;&lt;</span><span class="ws"> </span><span class="u">std</span><span class="w">::</span><span class="g">endl</span><span class="w">;</span></div>
<div class="ln" style="top:948px">28</div>
<div class="ln" style="top:978px">29</div>
<div class="cl" style="top:978px"><span class="ws">  </span><span class="c">//<span class="ws"> </span>modify<span class="ws"> </span>the<span class="ws"> </span>flags<span class="ws"> </span>by<span class="ws"> </span>manual<span class="ws"> </span>within<span class="ws"> </span>code</span></div>
<div class="ln" style="top:1008px">30</div>
<div class="cl" style="top:1008px"><span class="ws">  </span><span class="w">FLAGS_demo_flag_int32</span><span class="ws"> </span><span class="k">=</span><span class="ws"> </span><span class="n">30</span><span class="w">;</span></div>
<div class="ln" style="top:1038px">31</div>
<div class="cl" style="top:1038px"><span class="ws">  </span><span class="w">FLAGS_demo_flag_bool</span><span class="ws"> </span><span class="k">=</span><span class="ws"> </span><span class="n">true</span><span class="w">;</span></div>
<div class="ln" style="top:1068px">32</div>
<div class="cl" style="top:1068px"><span class="ws">  </span><span class="u">std</span><span class="w">::</span><span class="w">cout</span><span class="ws"> </span><span class="g">&lt;&lt;</span><span class="ws"> </span><span class="s">"</span><span class="n">\n</span><span class="s">Value<span class="ws"> </span>of<span class="ws"> </span>flag_int32<span class="ws"> </span>after<span class="ws"> </span>modifing<span class="ws"> </span>it<span class="ws"> </span>by<span class="ws"> </span>manual:<span class="ws"> </span>"</span></div>
<div class="ln" style="top:1098px">33</div>
<i class="ig" style="left:179.0px;top:1098px"></i>
<i class="ig" style="left:228.5px;top:1098px"></i>
<i class="ig" style="left:278.0px;top:1098px"></i>
<div class="cl" style="top:1098px"><span class="ws">            </span><span class="g">&lt;&lt;</span><span class="ws"> </span><span class="w">FLAGS_demo_flag_int32</span><span class="ws"> </span><span class="g">&lt;&lt;</span><span class="ws"> </span><span class="u">std</span><span class="w">::</span><span class="g">endl</span><span class="w">;</span></div>
<div class="ln" style="top:1128px">34</div>
<div class="cl" style="top:1128px"><span class="ws">  </span><span class="u">std</span><span class="w">::</span><span class="w">cout</span><span class="ws"> </span><span class="g">&lt;&lt;</span><span class="ws"> </span><span class="s">"Value<span class="ws"> </span>of<span class="ws"> </span>flag_bool<span class="ws"> </span>after<span class="ws"> </span>modifing<span class="ws"> </span>it<span class="ws"> </span>by<span class="ws"> </span>manual:<span class="ws"> </span>"</span></div>
<div class="ln" style="top:1158px">35</div>
<i class="ig" style="left:179.0px;top:1158px"></i>
<i class="ig" style="left:228.5px;top:1158px"></i>
<i class="ig" style="left:278.0px;top:1158px"></i>
<div class="cl" style="top:1158px"><span class="ws">            </span><span class="g">&lt;&lt;</span><span class="ws"> </span><span class="w">FLAGS_demo_flag_bool</span><span class="ws"> </span><span class="g">&lt;&lt;</span><span class="ws"> </span><span class="s">"</span><span class="n">\n</span><span class="s">"</span></div>
<div class="ln" style="top:1188px">36</div>
<i class="ig" style="left:179.0px;top:1188px"></i>
<i class="ig" style="left:228.5px;top:1188px"></i>
<i class="ig" style="left:278.0px;top:1188px"></i>
<div class="cl" style="top:1188px"><span class="ws">            </span><span class="g">&lt;&lt;</span><span class="ws"> </span><span class="u">std</span><span class="w">::</span><span class="g">endl</span><span class="w">;</span></div>
<div class="ln" style="top:1218px">37</div>
<div class="ln" style="top:1248px">38</div>
<div class="cl" style="top:1248px"><span class="ws">  </span><span class="k">return</span><span class="ws"> </span><span class="n">0</span><span class="w">;</span></div>
<div class="ln" style="top:1278px">39</div>
<div class="cl" style="top:1278px"><span class="b1">}</span></div>
<div class="ln" style="top:1308px">40</div>
</div>
<div class="abs" style="left:1169px;top:138px;width:2px;height:1220px;background:#50514a"></div>
<div class="abs" style="left:1171px;top:138px;width:6px;height:1220px;background:linear-gradient(90deg,rgba(0,0,0,.36),rgba(0,0,0,0))"></div>
<svg class="mm" width="90" height="84" viewBox="0 0 90 84" opacity="0.6"><rect x="0" y="0.3" width="1" height="1.5" fill="#f92672" opacity="0.55"/><rect x="1" y="0.3" width="7" height="1.5" fill="#f92672" opacity="1"/><rect x="9" y="0.3" width="1" height="1.5" fill="#e6db74" opacity="0.55"/><rect x="10" y="0.3" width="8" height="1.5" fill="#e6db74" opacity="1"/><rect x="18" y="0.3" width="1" height="1.5" fill="#e6db74" opacity="0.55"/><rect x="0" y="2.3" width="1" height="1.5" fill="#f92672" opacity="0.55"/><rect x="1" y="2.3" width="7" height="1.5" fill="#f92672" opacity="1"/><rect x="9" y="2.3" width="1" height="1.5" fill="#e6db74" opacity="0.55"/><rect x="10" y="2.3" width="6" height="1.5" fill="#e6db74" opacity="1"/><rect x="16" y="2.3" width="1" height="1.5" fill="#e6db74" opacity="0.55"/><rect x="0" y="6.3" width="1" height="1.5" fill="#f92672" opacity="0.55"/><rect x="1" y="6.3" width="7" height="1.5" fill="#f92672" opacity="1"/><rect x="9" y="6.3" width="1" height="1.5" fill="#e6db74" opacity="0.55"/><rect x="10" y="6.3" width="3" height="1.5" fill="#e6db74" opacity="1"/><rect x="13" y="6.3" width="1" height="1.5" fill="#e6db74" opacity="0.55"/><rect x="14" y="6.3" width="5" height="1.5" fill="#e6db74" opacity="1"/><rect x="19" y="6.3" width="1" height="1.5" fill="#e6db74" opacity="0.55"/><rect x="20" y="6.3" width="3" height="1.5" fill="#e6db74" opacity="1"/><rect x="23" y="6.3" width="1" height="1.5" fill="#e6db74" opacity="0.55"/><rect x="0" y="10.3" width="3" height="1.5" fill="#66d9ef" opacity="1"/><rect x="4" y="10.3" width="4" height="1.5" fill="#a6e22e" opacity="1"/><rect x="8" y="10.3" width="1" height="1.5" fill="#ffd700" opacity="0.55"/><rect x="9" y="10.3" width="3" height="1.5" fill="#66d9ef" opacity="1"/><rect x="13" y="10.3" width="4" height="1.5" fill="#fd971f" opacity="1"/><rect x="17" y="10.3" width="1" height="1.5" fill="#f8f8f2" opacity="0.55"/><rect x="19" y="10.3" width="4" height="1.5" fill="#66d9ef" opacity="1"/><rect x="24" y="10.3" width="1" height="1.5" fill="#f92672" opacity="0.55"/><rect x="25" y="10.3" width="4" height="1.5" fill="#fd971f" opacity="1"/><rect x="29" y="10.3" width="2" height="1.5" fill="#da70d6" opacity="0.55"/><rect x="31" y="10.3" width="1" height="1.5" fill="#ffd700" opacity="0.55"/><rect x="33" y="10.3" width="1" height="1.5" fill="#ffd700" opacity="0.55"/><rect x="2" y="12.3" width="2" height="1.5" fill="#88846f" opacity="0.55"/><rect x="5" y="12.3" width="5" height="1.5" fill="#88846f" opacity="1"/><rect x="10" y="12.3" width="1" height="1.5" fill="#88846f" opacity="0.55"/><rect x="12" y="12.3" width="5" height="1.5" fill="#88846f" opacity="1"/><rect x="18" y="12.3" width="3" height="1.5" fill="#88846f" opacity="1"/><rect x="22" y="12.3" width="7" height="1.5" fill="#88846f" opacity="1"/><rect x="30" y="12.3" width="6" height="1.5" fill="#88846f" opacity="1"/><rect x="37" y="12.3" width="5" height="1.5" fill="#88846f" opacity="1"/><rect x="43" y="12.3" width="8" height="1.5" fill="#88846f" opacity="1"/><rect x="2" y="14.3" width="3" height="1.5" fill="#a6e22e" opacity="1"/><rect x="5" y="14.3" width="2" height="1.5" fill="#f8f8f2" opacity="0.55"/><rect x="7" y="14.3" width="4" height="1.5" fill="#f8f8f2" opacity="1"/><rect x="12" y="14.3" width="2" height="1.5" fill="#a6e22e" opacity="0.55"/><rect x="15" y="14.3" width="1" height="1.5" fill="#e6db74" opacity="0.55"/><rect x="16" y="14.3" width="1" height="1.5" fill="#ae81ff" opacity="0.55"/><rect x="17" y="14.3" width="1" height="1.5" fill="#ae81ff" opacity="1"/><rect x="18" y="14.3" width="7" height="1.5" fill="#e6db74" opacity="1"/><rect x="26" y="14.3" width="5" height="1.5" fill="#e6db74" opacity="1"/><rect x="32" y="14.3" width="2" height="1.5" fill="#e6db74" opacity="1"/><rect x="35" y="14.3" width="4" height="1.5" fill="#e6db74" opacity="1"/><rect x="39" y="14.3" width="1" height="1.5" fill="#e6db74" opacity="0.55"/><rect x="40" y="14.3" width="5" height="1.5" fill="#e6db74" opacity="1"/><rect x="45" y="14.3" width="1" height="1.5" fill="#e6db74" opacity="0.55"/><rect x="47" y="14.3" width="1" height="1.5" fill="#e6db74" opacity="0.55"/><rect x="49" y="14.3" width="2" height="1.5" fill="#a6e22e" opacity="0.55"/><rect x="52" y="14.3" width="5" height="1.5" fill="#f8f8f2" opacity="1"/><rect x="57" y="14.3" width="1" height="1.5" fill="#f8f8f2" opacity="0.55"/><rect x="58" y="14.3" width="4" height="1.5" fill="#f8f8f2" opacity="1"/><rect x="62" y="14.3" width="1" height="1.5" fill="#f8f8f2" opacity="0.55"/><rect x="63" y="14.3" width="4" height="1.5" fill="#f8f8f2" opacity="1"/><rect x="67" y="14.3" width="1" height="1.5" fill="#f8f8f2" opacity="0.55"/><rect x="68" y="14.3" width="5" height="1.5" fill="#f8f8f2" opacity="1"/><rect x="12" y="16.3" width="2" height="1.5" fill="#a6e22e" opacity="0.55"/><rect x="15" y="16.3" width="3" height="1.5" fill="#a6e22e" opacity="1"/><rect x="18" y="16.3" width="2" height="1.5" fill="#f8f8f2" opacity="0.55"/><rect x="20" y="16.3" width="4" height="1.5" fill="#a6e22e" opacity="1"/><rect x="24" y="16.3" width="1" height="1.5" fill="#f8f8f2" opacity="0.55"/><rect x="2" y="18.3" width="3" height="1.5" fill="#a6e22e" opacity="1"/><rect x="5" y="18.3" width="2" height="1.5" fill="#f8f8f2" opacity="0.55"/><rect x="7" y="18.3" width="4" height="1.5" fill="#f8f8f2" opacity="1"/><rect x="12" y="18.3" width="2" height="1.5" fill="#a6e22e" opacity="0.55"/><rect x="15" y="18.3" width="1" height="1.5" fill="#e6db74" opacity="0.55"/><rect x="16" y="18.3" width="7" height="1.5" fill="#e6db74" opacity="1"/><rect x="24" y="18.3" width="5" height="1.5" fill="#e6db74" opacity="1"/><rect x="30" y="18.3" width="2" height="1.5" fill="#e6db74" opacity="1"/><rect x="33" y="18.3" width="4" height="1.5" fill="#e6db74" opacity="1"/><rect x="37" y="18.3" width="1" height="1.5" fill="#e6db74" opacity="0.55"/><rect x="38" y="18.3" width="4" height="1.5" fill="#e6db74" opacity="1"/><rect x="42" y="18.3" width="1" height="1.5" fill="#e6db74" opacity="0.55"/><rect x="44" y="18.3" width="1" height="1.5" fill="#e6db74" opacity="0.55"/><rect x="46" y="18.3" width="2" height="1.5" fill="#a6e22e" opacity="0.55"/><rect x="49" y="18.3" width="5" height="1.5" fill="#f8f8f2" opacity="1"/><rect x="54" y="18.3" width="1" height="1.5" fill="#f8f8f2" opacity="0.55"/><rect x="55" y="18.3" width="4" height="1.5" fill="#f8f8f2" opacity="1"/><rect x="59" y="18.3" width="1" height="1.5" fill="#f8f8f2" opacity="0.55"/><rect x="60" y="18.3" width="4" height="1.5" fill="#f8f8f2" opacity="1"/><rect x="64" y="18.3" width="1" height="1.5" fill="#f8f8f2" opacity="0.55"/><rect x="65" y="18.3" width="4" height="1.5" fill="#f8f8f2" opacity="1"/><rect x="12" y="20.3" width="2" height="1.5" fill="#a6e22e" opacity="0.55"/><rect x="15" y="20.3" width="3" height="1.5" fill="#a6e22e" opacity="1"/><rect x="18" y="20.3" width="2" height="1.5" fill="#f8f8f2" opacity="0.55"/><rect x="20" y="20.3" width="4" height="1.5" fill="#a6e22e" opacity="1"/><rect x="24" y="20.3" width="1" height="1.5" fill="#f8f8f2" opacity="0.55"/><rect x="2" y="24.3" width="2" height="1.5" fill="#88846f" opacity="0.55"/><rect x="5" y="24.3" width="3" height="1.5" fill="#88846f" opacity="1"/><rect x="9" y="24.3" width="5" height="1.5" fill="#88846f" opacity="1"/><rect x="15" y="24.3" width="4" height="1.5" fill="#88846f" opacity="1"/><rect x="20" y="24.3" width="7" height="1.5" fill="#88846f" opacity="1"/><rect x="28" y="24.3" width="4" height="1.5" fill="#88846f" opacity="1"/><rect x="2" y="26.3" width="6" height="1.5" fill="#a6e22e" opacity="1"/><rect x="8" y="26.3" width="2" height="1.5" fill="#f8f8f2" opacity="0.55"/><rect x="10" y="26.3" width="21" height="1.5" fill="#a6e22e" opacity="1"/><rect x="31" y="26.3" width="1" height="1.5" fill="#da70d6" opacity="0.55"/><rect x="32" y="26.3" width="1" height="1.5" fill="#f92672" opacity="0.55"/><rect x="33" y="26.3" width="4" height="1.5" fill="#fd971f" opacity="1"/><rect x="37" y="26.3" width="1" height="1.5" fill="#f8f8f2" opacity="0.55"/><rect x="39" y="26.3" width="1" height="1.5" fill="#f92672" opacity="0.55"/><rect x="40" y="26.3" width="4" height="1.5" fill="#fd971f" opacity="1"/><rect x="44" y="26.3" width="1" height="1.5" fill="#f8f8f2" opacity="0.55"/><rect x="46" y="26.3" width="4" height="1.5" fill="#ae81ff" opacity="1"/><rect x="50" y="26.3" width="1" height="1.5" fill="#da70d6" opacity="0.55"/><rect x="51" y="26.3" width="1" height="1.5" fill="#f8f8f2" opacity="0.55"/><rect x="2" y="28.3" width="3" height="1.5" fill="#a6e22e" opacity="1"/><rect x="5" y="28.3" width="2" height="1.5" fill="#f8f8f2" opacity="0.55"/><rect x="7" y="28.3" width="4" height="1.5" fill="#f8f8f2" opacity="1"/><rect x="12" y="28.3" width="2" height="1.5" fill="#a6e22e" opacity="0.55"/><rect x="15" y="28.3" width="1" height="1.5" fill="#e6db74" opacity="0.55"/><rect x="16" y="28.3" width="1" height="1.5" fill="#ae81ff" opacity="0.55"/><rect x="17" y="28.3" width="1" height="1.5" fill="#ae81ff" opacity="1"/><rect x="18" y="28.3" width="5" height="1.5" fill="#e6db74" opacity="1"/><rect x="24" y="28.3" width="2" height="1.5" fill="#e6db74" opacity="1"/><rect x="27" y="28.3" width="4" height="1.5" fill="#e6db74" opacity="1"/><rect x="31" y="28.3" width="1" height="1.5" fill="#e6db74" opacity="0.55"/><rect x="32" y="28.3" width="5" height="1.5" fill="#e6db74" opacity="1"/><rect x="38" y="28.3" width="4" height="1.5" fill="#e6db74" opacity="1"/><rect x="43" y="28.3" width="7" height="1.5" fill="#e6db74" opacity="1"/><rect x="51" y="28.3" width="4" height="1.5" fill="#e6db74" opacity="1"/><rect x="55" y="28.3" width="1" height="1.5" fill="#e6db74" opacity="0.55"/><rect x="57" y="28.3" width="1" height="1.5" fill="#e6db74" opacity="0.55"/><rect x="12" y="30.3" width="2" height="1.5" fill="#a6e22e" opacity="0.55"/><rect x="15" y="30.3" width="5" height="1.5" fill="#f8f8f2" opacity="1"/><rect x="20" y="30.3" width="1" height="1.5" fill="#f8f8f2" opacity="0.55"/><rect x="21" y="30.3" width="4" height="1.5" fill="#f8f8f2" opacity="1"/><rect x="25" y="30.3" width="1" height="1.5" fill="#f8f8f2" opacity="0.55"/><rect x="26" y="30.3" width="4" height="1.5" fill="#f8f8f2" opacity="1"/><rect x="30" y="30.3" width="1" height="1.5" fill="#f8f8f2" opacity="0.55"/><rect x="31" y="30.3" width="5" height="1.5" fill="#f8f8f2" opacity="1"/><rect x="37" y="30.3" width="2" height="1.5" fill="#a6e22e" opacity="0.55"/><rect x="40" y="30.3" width="3" height="1.5" fill="#a6e22e" opacity="1"/><rect x="43" y="30.3" width="2" height="1.5" fill="#f8f8f2" opacity="0.55"/><rect x="45" y="30.3" width="4" height="1.5" fill="#a6e22e" opacity="1"/><rect x="49" y="30.3" width="1" height="1.5" fill="#f8f8f2" opacity="0.55"/><rect x="2" y="32.3" width="3" height="1.5" fill="#a6e22e" opacity="1"/><rect x="5" y="32.3" width="2" height="1.5" fill="#f8f8f2" opacity="0.55"/><rect x="7" y="32.3" width="4" height="1.5" fill="#f8f8f2" opacity="1"/><rect x="12" y="32.3" width="2" height="1.5" fill="#a6e22e" opacity="0.55"/><rect x="15" y="32.3" width="1" height="1.5" fill="#e6db74" opacity="0.55"/><rect x="16" y="32.3" width="5" height="1.5" fill="#e6db74" opacity="1"/><rect x="22" y="32.3" width="2" height="1.5" fill="#e6db74" opacity="1"/><rect x="25" y="32.3" width="4" height="1.5" fill="#e6db74" opacity="1"/><rect x="29" y="32.3" width="1" height="1.5" fill="#e6db74" opacity="0.55"/><rect x="30" y="32.3" width="4" height="1.5" fill="#e6db74" opacity="1"/><rect x="35" y="32.3" width="4" height="1.5" fill="#e6db74" opacity="1"/><rect x="40" y="32.3" width="7" height="1.5" fill="#e6db74" opacity="1"/><rect x="48" y="32.3" width="4" height="1.5" fill="#e6db74" opacity="1"/><rect x="52" y="32.3" width="1" height="1.5" fill="#e6db74" opacity="0.55"/><rect x="54" y="32.3" width="1" height="1.5" fill="#e6db74" opacity="0.55"/><rect x="56" y="32.3" width="2" height="1.5" fill="#a6e22e" opacity="0.55"/><rect x="59" y="32.3" width="5" height="1.5" fill="#f8f8f2" opacity="1"/><rect x="64" y="32.3" width="1" height="1.5" fill="#f8f8f2" opacity="0.55"/><rect x="65" y="32.3" width="4" height="1.5" fill="#f8f8f2" opacity="1"/><rect x="69" y="32.3" width="1" height="1.5" fill="#f8f8f2" opacity="0.55"/><rect x="70" y="32.3" width="4" height="1.5" fill="#f8f8f2" opacity="1"/><rect x="74" y="32.3" width="1" height="1.5" fill="#f8f8f2" opacity="0.55"/><rect x="75" y="32.3" width="4" height="1.5" fill="#f8f8f2" opacity="1"/><rect x="12" y="34.3" width="2" height="1.5" fill="#a6e22e" opacity="0.55"/><rect x="15" y="34.3" width="3" height="1.5" fill="#a6e22e" opacity="1"/><rect x="18" y="34.3" width="2" height="1.5" fill="#f8f8f2" opacity="0.55"/><rect x="20" y="34.3" width="4" height="1.5" fill="#a6e22e" opacity="1"/><rect x="24" y="34.3" width="1" height="1.5" fill="#f8f8f2" opacity="0.55"/><rect x="2" y="38.3" width="2" height="1.5" fill="#88846f" opacity="0.55"/><rect x="5" y="38.3" width="3" height="1.5" fill="#88846f" opacity="1"/><rect x="9" y="38.3" width="5" height="1.5" fill="#88846f" opacity="1"/><rect x="15" y="38.3" width="4" height="1.5" fill="#88846f" opacity="1"/><rect x="20" y="38.3" width="1" height="1.5" fill="#88846f" opacity="1"/><rect x="22" y="38.3" width="4" height="1.5" fill="#88846f" opacity="1"/><rect x="27" y="38.3" width="4" height="1.5" fill="#88846f" opacity="1"/><rect x="31" y="38.3" width="1" height="1.5" fill="#88846f" opacity="0.55"/><rect x="33" y="38.3" width="8" height="1.5" fill="#88846f" opacity="1"/><rect x="42" y="38.3" width="4" height="1.5" fill="#88846f" opacity="1"/><rect x="47" y="38.3" width="2" height="1.5" fill="#88846f" opacity="1"/><rect x="50" y="38.3" width="3" height="1.5" fill="#88846f" opacity="1"/><rect x="54" y="38.3" width="4" height="1.5" fill="#88846f" opacity="1"/><rect x="59" y="38.3" width="4" height="1.5" fill="#88846f" opacity="1"/><rect x="64" y="38.3" width="2" height="1.5" fill="#88846f" opacity="1"/><rect x="67" y="38.3" width="6" height="1.5" fill="#88846f" opacity="1"/><rect x="2" y="40.3" width="3" height="1.5" fill="#a6e22e" opacity="1"/><rect x="5" y="40.3" width="2" height="1.5" fill="#f8f8f2" opacity="0.55"/><rect x="7" y="40.3" width="6" height="1.5" fill="#a6e22e" opacity="1"/><rect x="14" y="40.3" width="4" height="1.5" fill="#f8f8f2" opacity="1"/><rect x="18" y="40.3" width="1" height="1.5" fill="#f8f8f2" opacity="0.55"/><rect x="19" y="40.3" width="4" height="1.5" fill="#f8f8f2" opacity="1"/><rect x="23" y="40.3" width="1" height="1.5" fill="#f8f8f2" opacity="0.55"/><rect x="24" y="40.3" width="4" height="1.5" fill="#f8f8f2" opacity="1"/><rect x="29" y="40.3" width="1" height="1.5" fill="#f92672" opacity="0.55"/><rect x="6" y="42.3" width="2" height="1.5" fill="#e6db74" opacity="0.55"/><rect x="8" y="42.3" width="4" height="1.5" fill="#e6db74" opacity="1"/><rect x="12" y="42.3" width="1" height="1.5" fill="#e6db74" opacity="0.55"/><rect x="13" y="42.3" width="7" height="1.5" fill="#e6db74" opacity="1"/><rect x="20" y="42.3" width="1" height="1.5" fill="#e6db74" opacity="0.55"/><rect x="21" y="42.3" width="7" height="1.5" fill="#e6db74" opacity="1"/><rect x="28" y="42.3" width="1" height="1.5" fill="#e6db74" opacity="0.55"/><rect x="29" y="42.3" width="6" height="1.5" fill="#e6db74" opacity="1"/><rect x="35" y="42.3" width="1" height="1.5" fill="#e6db74" opacity="0.55"/><rect x="36" y="42.3" width="4" height="1.5" fill="#e6db74" opacity="1"/><rect x="40" y="42.3" width="1" height="1.5" fill="#e6db74" opacity="0.55"/><rect x="41" y="42.3" width="8" height="1.5" fill="#e6db74" opacity="1"/><rect x="49" y="42.3" width="1" height="1.5" fill="#e6db74" opacity="0.55"/><rect x="50" y="42.3" width="4" height="1.5" fill="#e6db74" opacity="1"/><rect x="54" y="42.3" width="1" height="1.5" fill="#e6db74" opacity="0.55"/><rect x="55" y="42.3" width="1" height="1.5" fill="#f8f8f2" opacity="0.55"/><rect x="2" y="44.3" width="6" height="1.5" fill="#a6e22e" opacity="1"/><rect x="8" y="44.3" width="2" height="1.5" fill="#f8f8f2" opacity="0.55"/><rect x="10" y="44.3" width="20" height="1.5" fill="#a6e22e" opacity="1"/><rect x="30" y="44.3" width="1" height="1.5" fill="#da70d6" opacity="0.55"/><rect x="31" y="44.3" width="1" height="1.5" fill="#e6db74" opacity="0.55"/><rect x="32" y="44.3" width="8" height="1.5" fill="#e6db74" opacity="1"/><rect x="40" y="44.3" width="1" height="1.5" fill="#e6db74" opacity="0.55"/><rect x="41" y="44.3" width="1" height="1.5" fill="#f8f8f2" opacity="0.55"/><rect x="43" y="44.3" width="4" height="1.5" fill="#f8f8f2" opacity="1"/><rect x="47" y="44.3" width="1" height="1.5" fill="#f8f8f2" opacity="0.55"/><rect x="48" y="44.3" width="4" height="1.5" fill="#f8f8f2" opacity="1"/><rect x="52" y="44.3" width="1" height="1.5" fill="#f8f8f2" opacity="0.55"/><rect x="53" y="44.3" width="4" height="1.5" fill="#f8f8f2" opacity="1"/><rect x="57" y="44.3" width="1" height="1.5" fill="#f8f8f2" opacity="0.55"/><rect x="58" y="44.3" width="1" height="1.5" fill="#a6e22e" opacity="1"/><rect x="59" y="44.3" width="1" height="1.5" fill="#a6e22e" opacity="0.55"/><rect x="60" y="44.3" width="3" height="1.5" fill="#a6e22e" opacity="1"/><rect x="63" y="44.3" width="2" height="1.5" fill="#179fff" opacity="0.55"/><rect x="65" y="44.3" width="1" height="1.5" fill="#da70d6" opacity="0.55"/><rect x="66" y="44.3" width="1" height="1.5" fill="#f8f8f2" opacity="0.55"/><rect x="2" y="46.3" width="3" height="1.5" fill="#a6e22e" opacity="1"/><rect x="5" y="46.3" width="2" height="1.5" fill="#f8f8f2" opacity="0.55"/><rect x="7" y="46.3" width="4" height="1.5" fill="#f8f8f2" opacity="1"/><rect x="12" y="46.3" width="2" height="1.5" fill="#a6e22e" opacity="0.55"/><rect x="15" y="46.3" width="1" height="1.5" fill="#e6db74" opacity="0.55"/><rect x="16" y="46.3" width="1" height="1.5" fill="#ae81ff" opacity="0.55"/><rect x="17" y="46.3" width="1" height="1.5" fill="#ae81ff" opacity="1"/><rect x="18" y="46.3" width="5" height="1.5" fill="#e6db74" opacity="1"/><rect x="24" y="46.3" width="2" height="1.5" fill="#e6db74" opacity="1"/><rect x="27" y="46.3" width="4" height="1.5" fill="#e6db74" opacity="1"/><rect x="31" y="46.3" width="1" height="1.5" fill="#e6db74" opacity="0.55"/><rect x="32" y="46.3" width="5" height="1.5" fill="#e6db74" opacity="1"/><rect x="38" y="46.3" width="4" height="1.5" fill="#e6db74" opacity="1"/><rect x="43" y="46.3" width="4" height="1.5" fill="#e6db74" opacity="1"/><rect x="48" y="46.3" width="4" height="1.5" fill="#e6db74" opacity="1"/><rect x="52" y="46.3" width="1" height="1.5" fill="#e6db74" opacity="0.55"/><rect x="54" y="46.3" width="1" height="1.5" fill="#e6db74" opacity="0.55"/><rect x="56" y="46.3" width="2" height="1.5" fill="#a6e22e" opacity="0.55"/><rect x="59" y="46.3" width="5" height="1.5" fill="#f8f8f2" opacity="1"/><rect x="64" y="46.3" width="1" height="1.5" fill="#f8f8f2" opacity="0.55"/><rect x="65" y="46.3" width="4" height="1.5" fill="#f8f8f2" opacity="1"/><rect x="69" y="46.3" width="1" height="1.5" fill="#f8f8f2" opacity="0.55"/><rect x="70" y="46.3" width="4" height="1.5" fill="#f8f8f2" opacity="1"/><rect x="74" y="46.3" width="1" height="1.5" fill="#f8f8f2" opacity="0.55"/><rect x="75" y="46.3" width="5" height="1.5" fill="#f8f8f2" opacity="1"/><rect x="12" y="48.3" width="2" height="1.5" fill="#a6e22e" opacity="0.55"/><rect x="15" y="48.3" width="3" height="1.5" fill="#a6e22e" opacity="1"/><rect x="18" y="48.3" width="2" height="1.5" fill="#f8f8f2" opacity="0.55"/><rect x="20" y="48.3" width="4" height="1.5" fill="#a6e22e" opacity="1"/><rect x="24" y="48.3" width="1" height="1.5" fill="#f8f8f2" opacity="0.55"/><rect x="2" y="50.3" width="3" height="1.5" fill="#a6e22e" opacity="1"/><rect x="5" y="50.3" width="2" height="1.5" fill="#f8f8f2" opacity="0.55"/><rect x="7" y="50.3" width="4" height="1.5" fill="#f8f8f2" opacity="1"/><rect x="12" y="50.3" width="2" height="1.5" fill="#a6e22e" opacity="0.55"/><rect x="15" y="50.3" width="1" height="1.5" fill="#e6db74" opacity="0.55"/><rect x="16" y="50.3" width="5" height="1.5" fill="#e6db74" opacity="1"/><rect x="22" y="50.3" width="2" height="1.5" fill="#e6db74" opacity="1"/><rect x="25" y="50.3" width="4" height="1.5" fill="#e6db74" opacity="1"/><rect x="29" y="50.3" width="1" height="1.5" fill="#e6db74" opacity="0.55"/><rect x="30" y="50.3" width="4" height="1.5" fill="#e6db74" opacity="1"/><rect x="35" y="50.3" width="4" height="1.5" fill="#e6db74" opacity="1"/><rect x="40" y="50.3" width="4" height="1.5" fill="#e6db74" opacity="1"/><rect x="45" y="50.3" width="4" height="1.5" fill="#e6db74" opacity="1"/><rect x="49" y="50.3" width="1" height="1.5" fill="#e6db74" opacity="0.55"/><rect x="51" y="50.3" width="1" height="1.5" fill="#e6db74" opacity="0.55"/><rect x="53" y="50.3" width="2" height="1.5" fill="#a6e22e" opacity="0.55"/><rect x="56" y="50.3" width="5" height="1.5" fill="#f8f8f2" opacity="1"/><rect x="61" y="50.3" width="1" height="1.5" fill="#f8f8f2" opacity="0.55"/><rect x="62" y="50.3" width="4" height="1.5" fill="#f8f8f2" opacity="1"/><rect x="66" y="50.3" width="1" height="1.5" fill="#f8f8f2" opacity="0.55"/><rect x="67" y="50.3" width="4" height="1.5" fill="#f8f8f2" opacity="1"/><rect x="71" y="50.3" width="1" height="1.5" fill="#f8f8f2" opacity="0.55"/><rect x="72" y="50.3" width="4" height="1.5" fill="#f8f8f2" opacity="1"/><rect x="12" y="52.3" width="2" height="1.5" fill="#a6e22e" opacity="0.55"/><rect x="15" y="52.3" width="3" height="1.5" fill="#a6e22e" opacity="1"/><rect x="18" y="52.3" width="2" height="1.5" fill="#f8f8f2" opacity="0.55"/><rect x="20" y="52.3" width="4" height="1.5" fill="#a6e22e" opacity="1"/><rect x="24" y="52.3" width="1" height="1.5" fill="#f8f8f2" opacity="0.55"/><rect x="2" y="56.3" width="2" height="1.5" fill="#88846f" opacity="0.55"/><rect x="5" y="56.3" width="6" height="1.5" fill="#88846f" opacity="1"/><rect x="12" y="56.3" width="3" height="1.5" fill="#88846f" opacity="1"/><rect x="16" y="56.3" width="5" height="1.5" fill="#88846f" opacity="1"/><rect x="22" y="56.3" width="2" height="1.5" fill="#88846f" opacity="1"/><rect x="25" y="56.3" width="6" height="1.5" fill="#88846f" opacity="1"/><rect x="32" y="56.3" width="6" height="1.5" fill="#88846f" opacity="1"/><rect x="39" y="56.3" width="4" height="1.5" fill="#88846f" opacity="1"/><rect x="2" y="58.3" width="5" height="1.5" fill="#f8f8f2" opacity="1"/><rect x="7" y="58.3" width="1" height="1.5" fill="#f8f8f2" opacity="0.55"/><rect x="8" y="58.3" width="4" height="1.5" fill="#f8f8f2" opacity="1"/><rect x="12" y="58.3" width="1" height="1.5" fill="#f8f8f2" opacity="0.55"/><rect x="13" y="58.3" width="4" height="1.5" fill="#f8f8f2" opacity="1"/><rect x="17" y="58.3" width="1" height="1.5" fill="#f8f8f2" opacity="0.55"/><rect x="18" y="58.3" width="5" height="1.5" fill="#f8f8f2" opacity="1"/><rect x="24" y="58.3" width="1" height="1.5" fill="#f92672" opacity="0.55"/><rect x="26" y="58.3" width="2" height="1.5" fill="#ae81ff" opacity="1"/><rect x="28" y="58.3" width="1" height="1.5" fill="#f8f8f2" opacity="0.55"/><rect x="2" y="60.3" width="5" height="1.5" fill="#f8f8f2" opacity="1"/><rect x="7" y="60.3" width="1" height="1.5" fill="#f8f8f2" opacity="0.55"/><rect x="8" y="60.3" width="4" height="1.5" fill="#f8f8f2" opacity="1"/><rect x="12" y="60.3" width="1" height="1.5" fill="#f8f8f2" opacity="0.55"/><rect x="13" y="60.3" width="4" height="1.5" fill="#f8f8f2" opacity="1"/><rect x="17" y="60.3" width="1" height="1.5" fill="#f8f8f2" opacity="0.55"/><rect x="18" y="60.3" width="4" height="1.5" fill="#f8f8f2" opacity="1"/><rect x="23" y="60.3" width="1" height="1.5" fill="#f92672" opacity="0.55"/><rect x="25" y="60.3" width="4" height="1.5" fill="#ae81ff" opacity="1"/><rect x="29" y="60.3" width="1" height="1.5" fill="#f8f8f2" opacity="0.55"/><rect x="2" y="62.3" width="3" height="1.5" fill="#a6e22e" opacity="1"/><rect x="5" y="62.3" width="2" height="1.5" fill="#f8f8f2" opacity="0.55"/><rect x="7" y="62.3" width="4" height="1.5" fill="#f8f8f2" opacity="1"/><rect x="12" y="62.3" width="2" height="1.5" fill="#a6e22e" opacity="0.55"/><rect x="15" y="62.3" width="1" height="1.5" fill="#e6db74" opacity="0.55"/><rect x="16" y="62.3" width="1" height="1.5" fill="#ae81ff" opacity="0.55"/><rect x="17" y="62.3" width="1" height="1.5" fill="#ae81ff" opacity="1"/><rect x="18" y="62.3" width="5" height="1.5" fill="#e6db74" opacity="1"/><rect x="24" y="62.3" width="2" height="1.5" fill="#e6db74" opacity="1"/><rect x="27" y="62.3" width="4" height="1.5" fill="#e6db74" opacity="1"/><rect x="31" y="62.3" width="1" height="1.5" fill="#e6db74" opacity="0.55"/><rect x="32" y="62.3" width="5" height="1.5" fill="#e6db74" opacity="1"/><rect x="38" y="62.3" width="5" height="1.5" fill="#e6db74" opacity="1"/><rect x="44" y="62.3" width="8" height="1.5" fill="#e6db74" opacity="1"/><rect x="53" y="62.3" width="2" height="1.5" fill="#e6db74" opacity="1"/><rect x="56" y="62.3" width="2" height="1.5" fill="#e6db74" opacity="1"/><rect x="59" y="62.3" width="6" height="1.5" fill="#e6db74" opacity="1"/><rect x="65" y="62.3" width="1" height="1.5" fill="#e6db74" opacity="0.55"/><rect x="67" y="62.3" width="1" height="1.5" fill="#e6db74" opacity="0.55"/><rect x="12" y="64.3" width="2" height="1.5" fill="#a6e22e" opacity="0.55"/><rect x="15" y="64.3" width="5" height="1.5" fill="#f8f8f2" opacity="1"/><rect x="20" y="64.3" width="1" height="1.5" fill="#f8f8f2" opacity="0.55"/><rect x="21" y="64.3" width="4" height="1.5" fill="#f8f8f2" opacity="1"/><rect x="25" y="64.3" width="1" height="1.5" fill="#f8f8f2" opacity="0.55"/><rect x="26" y="64.3" width="4" height="1.5" fill="#f8f8f2" opacity="1"/><rect x="30" y="64.3" width="1" height="1.5" fill="#f8f8f2" opacity="0.55"/><rect x="31" y="64.3" width="5" height="1.5" fill="#f8f8f2" opacity="1"/><rect x="37" y="64.3" width="2" height="1.5" fill="#a6e22e" opacity="0.55"/><rect x="40" y="64.3" width="3" height="1.5" fill="#a6e22e" opacity="1"/><rect x="43" y="64.3" width="2" height="1.5" fill="#f8f8f2" opacity="0.55"/><rect x="45" y="64.3" width="4" height="1.5" fill="#a6e22e" opacity="1"/><rect x="49" y="64.3" width="1" height="1.5" fill="#f8f8f2" opacity="0.55"/><rect x="2" y="66.3" width="3" height="1.5" fill="#a6e22e" opacity="1"/><rect x="5" y="66.3" width="2" height="1.5" fill="#f8f8f2" opacity="0.55"/><rect x="7" y="66.3" width="4" height="1.5" fill="#f8f8f2" opacity="1"/><rect x="12" y="66.3" width="2" height="1.5" fill="#a6e22e" opacity="0.55"/><rect x="15" y="66.3" width="1" height="1.5" fill="#e6db74" opacity="0.55"/><rect x="16" y="66.3" width="5" height="1.5" fill="#e6db74" opacity="1"/><rect x="22" y="66.3" width="2" height="1.5" fill="#e6db74" opacity="1"/><rect x="25" y="66.3" width="4" height="1.5" fill="#e6db74" opacity="1"/><rect x="29" y="66.3" width="1" height="1.5" fill="#e6db74" opacity="0.55"/><rect x="30" y="66.3" width="4" height="1.5" fill="#e6db74" opacity="1"/><rect x="35" y="66.3" width="5" height="1.5" fill="#e6db74" opacity="1"/><rect x="41" y="66.3" width="8" height="1.5" fill="#e6db74" opacity="1"/><rect x="50" y="66.3" width="2" height="1.5" fill="#e6db74" opacity="1"/><rect x="53" y="66.3" width="2" height="1.5" fill="#e6db74" opacity="1"/><rect x="56" y="66.3" width="6" height="1.5" fill="#e6db74" opacity="1"/><rect x="62" y="66.3" width="1" height="1.5" fill="#e6db74" opacity="0.55"/><rect x="64" y="66.3" width="1" height="1.5" fill="#e6db74" opacity="0.55"/><rect x="12" y="68.3" width="2" height="1.5" fill="#a6e22e" opacity="0.55"/><rect x="15" y="68.3" width="5" height="1.5" fill="#f8f8f2" opacity="1"/><rect x="20" y="68.3" width="1" height="1.5" fill="#f8f8f2" opacity="0.55"/><rect x="21" y="68.3" width="4" height="1.5" fill="#f8f8f2" opacity="1"/><rect x="25" y="68.3" width="1" height="1.5" fill="#f8f8f2" opacity="0.55"/><rect x="26" y="68.3" width="4" height="1.5" fill="#f8f8f2" opacity="1"/><rect x="30" y="68.3" width="1" height="1.5" fill="#f8f8f2" opacity="0.55"/><rect x="31" y="68.3" width="4" height="1.5" fill="#f8f8f2" opacity="1"/><rect x="36" y="68.3" width="2" height="1.5" fill="#a6e22e" opacity="0.55"/><rect x="39" y="68.3" width="1" height="1.5" fill="#e6db74" opacity="0.55"/><rect x="40" y="68.3" width="1" height="1.5" fill="#ae81ff" opacity="0.55"/><rect x="41" y="68.3" width="1" height="1.5" fill="#ae81ff" opacity="1"/><rect x="42" y="68.3" width="1" height="1.5" fill="#e6db74" opacity="0.55"/><rect x="12" y="70.3" width="2" height="1.5" fill="#a6e22e" opacity="0.55"/><rect x="15" y="70.3" width="3" height="1.5" fill="#a6e22e" opacity="1"/><rect x="18" y="70.3" width="2" height="1.5" fill="#f8f8f2" opacity="0.55"/><rect x="20" y="70.3" width="4" height="1.5" fill="#a6e22e" opacity="1"/><rect x="24" y="70.3" width="1" height="1.5" fill="#f8f8f2" opacity="0.55"/><rect x="2" y="74.3" width="6" height="1.5" fill="#f92672" opacity="1"/><rect x="9" y="74.3" width="1" height="1.5" fill="#ae81ff" opacity="1"/><rect x="10" y="74.3" width="1" height="1.5" fill="#f8f8f2" opacity="0.55"/><rect x="0" y="76.3" width="1" height="1.5" fill="#ffd700" opacity="0.55"/></svg>
<div class="abs" style="left:1269px;top:138px;width:1px;height:1219px;background:#3a3b35"></div>
<div class="abs" style="left:1270px;top:138px;width:20px;height:3px;background:#c8c8c0"></div>
<div id="panel"></div>
<span class="lb" style="left:1322px;top:65.0px;height:30px;line-height:30px;font-size:16.2px;color:#807d6c;font-family:'Liberation Sans',sans-serif;font-weight:400;transform:scaleX(0.8892);transform-origin:0 50%;">PROBLEMS</span>
<span class="lb" style="left:1438px;top:65.0px;height:30px;line-height:30px;font-size:16.2px;color:#807d6c;font-family:'Liberation Sans',sans-serif;font-weight:400;transform:scaleX(0.9317);transform-origin:0 50%;">OUTPUT</span>
<span class="lb" style="left:1536px;top:65.0px;height:30px;line-height:30px;font-size:16.2px;color:#807d6c;font-family:'Liberation Sans',sans-serif;font-weight:400;transform:scaleX(0.8561);transform-origin:0 50%;">PORTS</span>
<span class="lb" style="left:1620px;top:65.0px;height:30px;line-height:30px;font-size:16.2px;color:#807d6c;font-family:'Liberation Sans',sans-serif;font-weight:400;transform:scaleX(0.9063);transform-origin:0 50%;">DEBUG CONSOLE</span>
<span class="lb" style="left:1784px;top:65.0px;height:30px;line-height:30px;font-size:16.2px;color:#807d6c;font-family:'Liberation Sans',sans-serif;font-weight:400;transform:scaleX(0.8819);transform-origin:0 50%;">SEARCH</span>
<span class="lb" style="left:1879.5px;top:65.0px;height:30px;line-height:30px;font-size:16.2px;color:#f8f8f2;font-family:'Liberation Sans',sans-serif;font-weight:400;transform:scaleX(0.9467);transform-origin:0 50%;">TERMINAL</span>
<div class="abs" style="left:1876px;top:97.5px;width:83px;height:1.5px;background:#7a7667"></div>
<svg style="left:2112px;top:69.5px" width="23" height="22" viewBox="0 0 23 22" ><path d="M11.400 1 21.600 5.800v10.200L11.500 21.200 1 16V5.800z" fill="none" stroke="#c5c5c0" stroke-width="1.300" stroke-linejoin="round"/><path d="M11.400 10.800 21.600 5.800v10.200L11.500 21.200z" fill="#c5c5c0"/><path d="M15.600 11.800c-1.600.4-1.400 1.800 0 2s1.400 1.800-.4 2.200M15.400 11v5.800M17.800 15.500h1.600" fill="none" stroke="#272822" stroke-width="1"/></svg>
<span class="lb" style="left:2141.5px;top:64.0px;height:30px;line-height:30px;font-size:18.2px;color:#ccccc6;font-family:'Liberation Sans',sans-serif;font-weight:400;transform:scaleX(0.8951);transform-origin:0 50%;">bash - gflags_demo</span>
<svg style="left:2300px;top:68px" width="22" height="22" viewBox="0 0 22 22" ><path d="M11 1.500v19M1.500 11h19" fill="none" stroke="#c5c5c0" stroke-width="1.6" stroke-linejoin="round" stroke-linecap="round"/></svg>
<svg style="left:2329px;top:74px" width="14" height="10" viewBox="0 0 14 10" ><path d="M1.500 1.500 7 7.500 12.500 1.500" fill="none" stroke="#c5c5c0" stroke-width="1.6" stroke-linejoin="round" stroke-linecap="round"/></svg>
<svg style="left:2358px;top:68px" width="21" height="21" viewBox="0 0 21 21" ><rect x="1" y="1" width="19" height="19" rx="2" fill="none" stroke="#c5c5c0" stroke-width="1.6" stroke-linejoin="round" stroke-linecap="round"/><path d="M1 10.500h19" fill="none" stroke="#c5c5c0" stroke-width="1.6" stroke-linejoin="round" stroke-linecap="round"/></svg>
<svg style="left:2399px;top:68px" width="19" height="21" viewBox="0 0 19 21" ><path d="M1 4.500h17M6.500 4.500V1.500h6v3M3.200 5v13.500a1.500 1.500 0 0 0 1.500 1.500h9.600a1.500 1.500 0 0 0 1.500-1.500V5" fill="none" stroke="#c5c5c0" stroke-width="1.6" stroke-linejoin="round" stroke-linecap="round"/><path d="M7.400 7.500v10M11.600 7.500v10" fill="none" stroke="#c5c5c0" stroke-width="1.6" stroke-linejoin="round" stroke-linecap="round"/></svg>
<svg style="left:2437px;top:77px" width="22" height="4" viewBox="0 0 22 4" ><circle cx="2.500" cy="2" r="1.700" fill="#c5c5c0"/><circle cx="11" cy="2" r="1.700" fill="#c5c5c0"/><circle cx="19.500" cy="2" r="1.700" fill="#c5c5c0"/></svg>
<svg style="left:2480px;top:70px" width="12" height="18" viewBox="0 0 12 18" ><path d="M10 1.500 2 9l8 7.500" fill="none" stroke="#c5c5c0" stroke-width="1.6" stroke-linejoin="round" stroke-linecap="round"/></svg>
<svg style="left:2519px;top:72px" width="15" height="15" viewBox="0 0 15 15" ><path d="M1 1l13 13M14 1 1 14" fill="none" stroke="#c5c5c0" stroke-width="1.6" stroke-linejoin="round" stroke-linecap="round"/></svg>
<div class="abs" style="left:2546px;top:105px;width:5px;height:9px;background:#1b83aa"></div>
<div class="abs" style="left:2546px;top:168px;width:5px;height:18px;background:#1b83aa"></div>
<div class="abs" style="left:2556px;top:504px;width:4px;height:18px;background:#f14c4c"></div>
<div class="abs" style="left:2556px;top:624px;width:4px;height:18px;background:#f14c4c"></div>
<div class="abs" style="left:2546px;top:743px;width:5px;height:18px;background:#5b5b56"></div>
<div id="term">
<i class="td" style="top:111.4px"></i>
<div class="tl" style="top:105px"><b class="tg">shipeng@HelloWorld</b>:<b class="tb">~/Desktop/gflags_demo</b> $ cat flagfile.conf</div>
<div class="tl" style="top:129px">--demo_flag_int32=20</div>
<div class="tl" style="top:153px">--nodemo_flag_bool</div>
<i class="td" style="top:183.4px"></i>
<div class="tl" style="top:177px"><b class="tg">shipeng@HelloWorld</b>:<b class="tb">~/Desktop/gflags_demo</b> $ ./bin/gflags_demo --demo_flag_int32=10 --demo_flag_bool</div>
<div class="tl" style="top:225px">Default value of flag_int32: 0</div>
<div class="tl" style="top:249px">Default value of flag_bool: 0</div>
<div class="tl" style="top:297px">Value of flag_int32 from command line: 10</div>
<div class="tl" style="top:321px">Value of flag_bool from command line: 1</div>
<div class="tl" style="top:369px">Value of flag_int32 from flag file: 20</div>
<div class="tl" style="top:393px">Value of flag_bool from flag file: 0</div>
<div class="tl" style="top:441px">Value of flag_int32 after modifing it by manual: 30</div>
<div class="tl" style="top:465px">Value of flag_bool after modifing it by manual: 1</div>
<svg class="te" style="top:518.3px" width="14" height="14" viewBox="0 0 14 14"><circle cx="7" cy="7" r="5.6" fill="none" stroke="#f14c4c" stroke-width="1.6"/><path d="M4.6 4.6l4.8 4.8M9.4 4.6l-4.8 4.8" stroke="#f14c4c" stroke-width="1.6"/></svg>
<div class="tl" style="top:513px"><b class="tg">shipeng@HelloWorld</b>:<b class="tb">~/Desktop/gflags_demo</b> $ ./bin/gflags_demo --demo_flag_int32=100 --demo_flag_bool</div>
<div class="tl" style="top:561px">Default value of flag_int32: 0</div>
<div class="tl" style="top:585px">Default value of flag_bool: 0</div>
<div class="tl" style="top:609px">ERROR: failed validation of new value '100' for flag 'demo_flag_int32'</div>
<svg class="te" style="top:638.3px" width="14" height="14" viewBox="0 0 14 14"><circle cx="7" cy="7" r="5.6" fill="none" stroke="#f14c4c" stroke-width="1.6"/><path d="M4.6 4.6l4.8 4.8M9.4 4.6l-4.8 4.8" stroke="#f14c4c" stroke-width="1.6"/></svg>
<div class="tl" style="top:633px"><b class="tg">shipeng@HelloWorld</b>:<b class="tb">~/Desktop/gflags_demo</b> $ ./bin/gflags_demo --demo_flag_int32=10 --demo_flag_bool --demo_flag</div>
<div class="tl" style="top:681px">Default value of flag_int32: 0</div>
<div class="tl" style="top:705px">Default value of flag_bool: 0</div>
<div class="tl" style="top:729px">ERROR: unknown command line flag 'demo_flag'</div>
<i class="to" style="top:759px"></i><i class="cur" style="top:754px"></i>
<div class="tl" style="top:753px"><b class="tg">shipeng@HelloWorld</b>:<b class="tb">~/Desktop/gflags_demo</b> $ </div>
</div>
<div id="status"><div id="remote"></div></div>
<svg style="left:17px;top:1364px" width="18" height="20" viewBox="0 0 18 20" ><path d="M1.800 7.400 8.300 12.300 2 18.800M15 1.300 8.600 7.400l6.300 5.600" fill="none" stroke="#ffffff" stroke-width="1.700" stroke-linejoin="round" stroke-linecap="round"/></svg>
<span class="lb" style="left:41px;top:1359.8px;height:30px;line-height:30px;font-size:18.2px;color:#ffffff;font-family:'Liberation Sans',sans-serif;font-weight:400;transform:scaleX(0.9725);transform-origin:0 50%;">SSH: vm-ubuntu-2004</span>
<svg style="left:245px;top:1365px" width="18" height="18" viewBox="0 0 18 18" ><circle cx="9" cy="9" r="8" fill="none" stroke="#ffffff" stroke-width="1.700" stroke-linejoin="round" stroke-linecap="round"/><path d="M5.500 5.500l7 7M12.500 5.500l-7 7" fill="none" stroke="#ffffff" stroke-width="1.700" stroke-linejoin="round" stroke-linecap="round"/></svg>
<span class="lb" style="left:269.5px;top:1359.8px;height:30px;line-height:30px;font-size:18.2px;color:#ffffff;font-family:'Liberation Sans',sans-serif;font-weight:400;transform:scaleX(0.9383);transform-origin:0 50%;">0</span>
<svg style="left:285px;top:1365px" width="20" height="18" viewBox="0 0 20 18" ><path d="M10 1.500 18.500 17h-17z" fill="none" stroke="#ffffff" stroke-width="1.700" stroke-linejoin="round" stroke-linecap="round"/><path d="M10 7v5.500M10 14.500v.4" fill="none" stroke="#ffffff" stroke-width="1.700" stroke-linejoin="round" stroke-linecap="round"/></svg>
<span class="lb" style="left:310px;top:1359.8px;height:30px;line-height:30px;font-size:18.2px;color:#ffffff;font-family:'Liberation Sans',sans-serif;font-weight:400;transform:scaleX(0.9877);transform-origin:0 50%;">0</span>
<svg style="left:345px;top:1364px" width="20" height="20" viewBox="0 0 20 20" ><path d="M10 7.500 5 19M10 7.500 15 19M7 14.500h6" fill="none" stroke="#ffffff" stroke-width="1.700" stroke-linejoin="round" stroke-linecap="round"/><circle cx="10" cy="6.500" r="1.600" fill="none" stroke="#ffffff" stroke-width="1.700" stroke-linejoin="round" stroke-linecap="round"/><path d="M5.800 10.500a5.500 5.500 0 0 1 0-8M14.200 10.500a5.500 5.500 0 0 0 0-8M3 12.500A9 9 0 0 1 3 .500M17 12.500A9 9 0 0 0 17 .500" fill="none" stroke="#ffffff" stroke-width="1.700" stroke-linejoin="round" stroke-linecap="round"/></svg>
<span class="lb" style="left:370px;top:1359.8px;height:30px;line-height:30px;font-size:18.2px;color:#ffffff;font-family:'Liberation Sans',sans-serif;font-weight:400;transform:scaleX(0.9383);transform-origin:0 50%;">0</span>
<svg style="left:404px;top:1365px" width="18" height="18" viewBox="0 0 18 18" ><circle cx="9" cy="9" r="8" fill="none" stroke="#ffffff" stroke-width="1.700" stroke-linejoin="round" stroke-linecap="round"/><path d="M9 8v5.500M9 4.800v.4" fill="none" stroke="#ffffff" stroke-width="1.700" stroke-linejoin="round" stroke-linecap="round"/></svg>
<span class="lb" style="left:429.5px;top:1359.8px;height:30px;line-height:30px;font-size:18.2px;color:#ffffff;font-family:'Liberation Sans',sans-serif;font-weight:400;transform:scaleX(0.9505);transform-origin:0 50%;">CMake: [Debug]: Ready</span>
<svg style="left:638px;top:1364px" width="20" height="20" viewBox="0 0 20 20" ><path d="M2 18 11.500 8.500M14 6l4-4M3 2l5 5M2 2l2.500 .5M12 12l6 6" fill="none" stroke="#ffffff" stroke-width="1.700" stroke-linejoin="round" stroke-linecap="round"/><path d="M17.500 1.500a4 4 0 0 0-5 5.500L2 17.500 3.500 19 14 8.500a4 4 0 0 0 5-5.500L16.500 5.500 15 4z" fill="none" stroke="#ffffff" stroke-width="1.700" stroke-linejoin="round" stroke-linecap="round"/></svg>
<span class="lb" style="left:664.5px;top:1359.8px;height:30px;line-height:30px;font-size:18.2px;color:#ffffff;font-family:'Liberation Sans',sans-serif;font-weight:400;transform:scaleX(0.9496);transform-origin:0 50%;">[GCC 9.4.0 x86_64-linux-gnu]</span>
<svg style="left:918px;top:1364px" width="20" height="20" viewBox="0 0 20 20" ><path d="M8.46 3.58 L8.51 0.62 L11.49 0.62 L11.54 3.58 L13.45 4.37 L15.58 2.31 L17.69 4.42 L15.63 6.55 L16.42 8.46 L19.38 8.51 L19.38 11.49 L16.42 11.54 L15.63 13.45 L17.69 15.58 L15.58 17.69 L13.45 15.63 L11.54 16.42 L11.49 19.38 L8.51 19.38 L8.46 16.42 L6.55 15.63 L4.42 17.69 L2.31 15.58 L4.37 13.45 L3.58 11.54 L0.62 11.49 L0.62 8.51 L3.58 8.46 L4.37 6.55 L2.31 4.42 L4.42 2.31 L6.55 4.37Z" fill="none" stroke="#ffffff" stroke-width="1.5" stroke-linejoin="round"/><circle cx="10.0" cy="10.0" r="2.20" fill="none" stroke="#ffffff" stroke-width="1.5"/></svg>
<span class="lb" style="left:943.5px;top:1359.8px;height:30px;line-height:30px;font-size:18.2px;color:#ffffff;font-family:'Liberation Sans',sans-serif;font-weight:400;transform:scaleX(0.9764);transform-origin:0 50%;">Build</span>
<span class="lb" style="left:1007.5px;top:1359.8px;height:30px;line-height:30px;font-size:18.2px;color:#ffffff;font-family:'Liberation Sans',sans-serif;font-weight:400;transform:scaleX(0.9713);transform-origin:0 50%;">[all]</span>
<svg style="left:1060px;top:1364px" width="20" height="20" viewBox="0 0 20 20" ><ellipse cx="10" cy="11.500" rx="5" ry="6.500" fill="none" stroke="#ffffff" stroke-width="1.700" stroke-linejoin="round" stroke-linecap="round"/><path d="M5 9h10M1 7l4 2.500M19 7l-4 2.500M.500 13H5M15 13h4.500M2 19l3.500-3M18 19l-3.500-3M6.500 5a3.500 3.500 0 0 1 7 0" fill="none" stroke="#ffffff" stroke-width="1.700" stroke-linejoin="round" stroke-linecap="round"/></svg>
<svg style="left:1107px;top:1365px" width="16" height="18" viewBox="0 0 16 18" ><path d="M1.500 1.500v15L14.500 9z" fill="none" stroke="#ffffff" stroke-width="1.700" stroke-linejoin="round" stroke-linecap="round"/></svg>
<span class="lb" style="left:1150.5px;top:1359.8px;height:30px;line-height:30px;font-size:18.2px;color:#ffffff;font-family:'Liberation Sans',sans-serif;font-weight:400;transform:scaleX(0.8943);transform-origin:0 50%;">1.47 KiB</span>
<span class="lb" style="left:1802.8px;top:1359.8px;height:30px;line-height:30px;font-size:18.2px;color:#ffffff;font-family:'Liberation Sans',sans-serif;font-weight:400;transform:scaleX(0.9350);transform-origin:0 50%;">Ln 1, Col 20</span>
<span class="lb" style="left:1918.7px;top:1359.8px;height:30px;line-height:30px;font-size:18.2px;color:#ffffff;font-family:'Liberation Sans',sans-serif;font-weight:400;transform:scaleX(0.9062);transform-origin:0 50%;">Spaces: 4</span>
<span class="lb" style="left:2016px;top:1359.8px;height:30px;line-height:30px;font-size:18.2px;color:#ffffff;font-family:'Liberation Sans',sans-serif;font-weight:400;transform:scaleX(0.9218);transform-origin:0 50%;">UTF-8</span>
<span class="lb" style="left:2087.5px;top:1359.8px;height:30px;line-height:30px;font-size:18.2px;color:#ffffff;font-family:'Liberation Sans',sans-serif;font-weight:400;transform:scaleX(0.8211);transform-origin:0 50%;">CRLF</span>
<span class="lb" style="left:2150.5px;top:1359.8px;height:30px;line-height:30px;font-size:18.2px;color:#ffffff;font-family:'Liberation Sans',sans-serif;font-weight:400;transform:scaleX(1.0177);transform-origin:0 50%;">C++</span>
<svg style="left:2212px;top:1366px" width="18" height="15" viewBox="0 0 18 15" ><path d="M1.500 8.500 6 13.500 16.500 1.500" fill="none" stroke="#ffffff" stroke-width="1.700" stroke-linejoin="round" stroke-linecap="round"/></svg>
<span class="lb" style="left:2236.5px;top:1359.8px;height:30px;line-height:30px;font-size:18.2px;color:#ffffff;font-family:'Liberation Sans',sans-serif;font-weight:400;transform:scaleX(0.9394);transform-origin:0 50%;">Spell</span>
<span class="lb" style="left:2298.7px;top:1359.8px;height:30px;line-height:30px;font-size:18.2px;color:#ffffff;font-family:'Liberation Sans',sans-serif;font-weight:400;transform:scaleX(0.9498);transform-origin:0 50%;">Linux</span>
<svg style="left:2364px;top:1364px" width="20" height="20" viewBox="0 0 20 20" ><circle cx="10" cy="10" r="8.500" fill="none" stroke="#ffffff" stroke-width="1.700" stroke-linejoin="round" stroke-linecap="round"/><path d="M4 16 16 4" fill="none" stroke="#ffffff" stroke-width="1.700" stroke-linejoin="round" stroke-linecap="round"/></svg>
<span class="lb" style="left:2390.5px;top:1359.8px;height:30px;line-height:30px;font-size:18.2px;color:#ffffff;font-family:'Liberation Sans',sans-serif;font-weight:400;transform:scaleX(0.9723);transform-origin:0 50%;">Prettier</span>
<svg style="left:2473px;top:1364px" width="20" height="20" viewBox="0 0 20 20" ><path d="M7 8.500V1.500h12v8h-3l-2.500 2.500V9.500" fill="none" stroke="#ffffff" stroke-width="1.700" stroke-linejoin="round" stroke-linecap="round"/><circle cx="6" cy="11" r="2.800" fill="none" stroke="#ffffff" stroke-width="1.700" stroke-linejoin="round" stroke-linecap="round"/><path d="M1 19c0-3.500 2-5 5-5s5 1.500 5 5" fill="none" stroke="#ffffff" stroke-width="1.700" stroke-linejoin="round" stroke-linecap="round"/><path d="M10.500 5.500l1.800 1.800L16 3.800" fill="none" stroke="#ffffff" stroke-width="1.700" stroke-linejoin="round" stroke-linecap="round"/></svg>
<svg style="left:2518px;top:1364px" width="22" height="20" viewBox="0 0 22 20" ><path d="M4 15.500h11M5.500 15.500V9a5.500 5.500 0 0 1 9-4M15.500 9v6.500M9 18.500h3" fill="none" stroke="#ffffff" stroke-width="1.700" stroke-linejoin="round" stroke-linecap="round"/><path d="M1.500 19.500 20 1" fill="none" stroke="#ffffff" stroke-width="1.700" stroke-linejoin="round" stroke-linecap="round"/></svg>
</body></html>
